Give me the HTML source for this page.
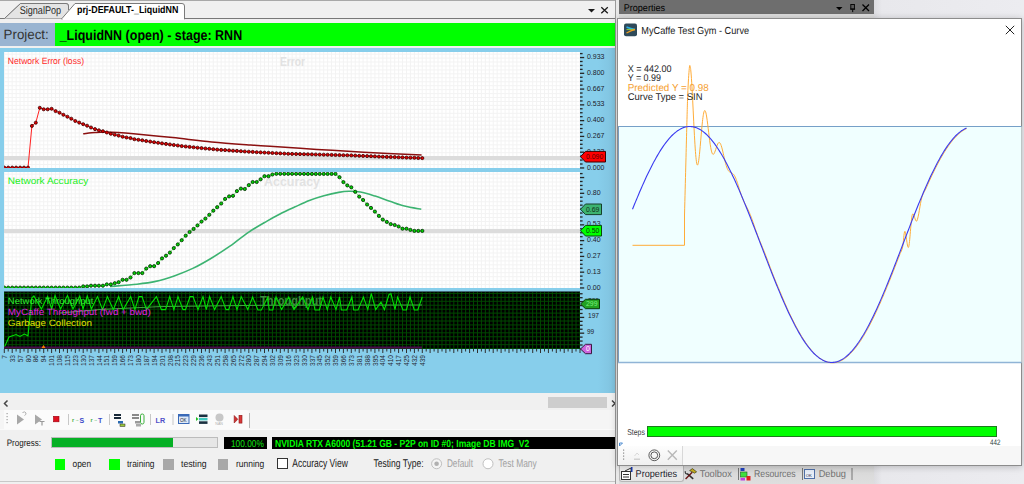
<!DOCTYPE html>
<html><head><meta charset="utf-8"><style>
html,body{margin:0;padding:0;}
body{width:1024px;height:484px;overflow:hidden;position:relative;background:#f0f0f0;font-family:"Liberation Sans",sans-serif;}
.t{position:absolute;white-space:nowrap;line-height:1;transform-origin:0 0;font-family:"Liberation Sans",sans-serif;}
svg{overflow:visible}
</style></head><body>
<div style="position:absolute;left:0;top:0;width:615px;height:1px;background:#a8a8a8"></div>
<svg style="position:absolute;left:0;top:0" width="615" height="23">
<rect x="0" y="1" width="615" height="22" fill="#f0f0f0"/>
<line x1="0" y1="18.5" x2="615" y2="18.5" stroke="#787878" stroke-width="1"/>
<path d="M4.5,18.5 L20.5,3.5 L66,3.5 Q68.5,3.5 68.5,6 L68.5,9" fill="#e4e4e4" stroke="#7a7a7a" stroke-width="1"/>
<path d="M4.5,18.5 L20.5,3.5 L66,3.5 Q68.5,3.5 68.5,6 L68.5,12 L62,18.5 Z" fill="#e4e4e4" stroke="none"/>
<path d="M4.5,18.5 L20.5,3.5 L66,3.5 Q68.5,3.5 68.5,6 L68.5,10" fill="none" stroke="#7a7a7a" stroke-width="1"/>
<path d="M61.5,19 L75,3.5 L182,3.5 Q184.5,3.5 184.5,6 L184.5,19 Z" fill="#ffffff" stroke="#7a7a7a" stroke-width="1"/>
<rect x="62.5" y="18" width="121.5" height="2" fill="#fff"/>
<path d="M588,9 L595,9 L591.5,12.5 Z" fill="#1a1a1a"/>
<path d="M601.3,7.2 L607.8,13.2 M607.8,7.2 L601.3,13.2" stroke="#1a1a1a" stroke-width="1.3"/>
</svg>


<div style="position:absolute;left:0;top:23px;width:55px;height:23px;background:#99b4d1"></div>
<div style="position:absolute;left:55px;top:23px;width:560px;height:23px;background:#00ff00"></div>


<div style="position:absolute;left:0;top:48px;width:615px;height:345px;background:linear-gradient(90deg,#87ceeb 0,#87ceeb 598px,#80c2de 615px)"></div>
<svg style="position:absolute;left:0;top:0" width="615" height="400">
<defs><pattern id="gw" x="1" y="1" width="4" height="4" patternUnits="userSpaceOnUse"><rect width="4" height="4" fill="#fff"/><rect x="0" y="0" width="4" height="1" fill="#f5f5f5"/><rect x="0" y="0" width="1" height="4" fill="#f5f5f5"/></pattern><pattern id="gb" x="1" y="1" width="4" height="4" patternUnits="userSpaceOnUse"><rect width="4" height="4" fill="#000"/><rect x="0" y="0" width="4" height="1" fill="#053d05"/><rect x="0" y="0" width="1" height="4" fill="#053d05"/></pattern><clipPath id="c1"><rect x="4" y="52" width="576" height="116"/></clipPath><clipPath id="c2"><rect x="4" y="172" width="576" height="116"/></clipPath><clipPath id="c3"><rect x="4" y="291.5" width="576" height="57.5"/></clipPath></defs>
<rect x="4" y="52" width="576" height="116" fill="#fff"/>
<g clip-path="url(#c1)"><path d="M4.30,52V168M8.24,52V168M12.19,52V168M16.13,52V168M20.07,52V168M24.02,52V168M27.96,52V168M31.90,52V168M35.84,52V168M39.79,52V168M43.73,52V168M47.67,52V168M51.62,52V168M55.56,52V168M59.50,52V168M63.45,52V168M67.39,52V168M71.33,52V168M75.27,52V168M79.22,52V168M83.16,52V168M87.10,52V168M91.05,52V168M94.99,52V168M98.93,52V168M102.88,52V168M106.82,52V168M110.76,52V168M114.70,52V168M118.65,52V168M122.59,52V168M126.53,52V168M130.48,52V168M134.42,52V168M138.36,52V168M142.31,52V168M146.25,52V168M150.19,52V168M154.13,52V168M158.08,52V168M162.02,52V168M165.96,52V168M169.91,52V168M173.85,52V168M177.79,52V168M181.74,52V168M185.68,52V168M189.62,52V168M193.56,52V168M197.51,52V168M201.45,52V168M205.39,52V168M209.34,52V168M213.28,52V168M217.22,52V168M221.17,52V168M225.11,52V168M229.05,52V168M232.99,52V168M236.94,52V168M240.88,52V168M244.82,52V168M248.77,52V168M252.71,52V168M256.65,52V168M260.60,52V168M264.54,52V168M268.48,52V168M272.42,52V168M276.37,52V168M280.31,52V168M284.25,52V168M288.20,52V168M292.14,52V168M296.08,52V168M300.03,52V168M303.97,52V168M307.91,52V168M311.85,52V168M315.80,52V168M319.74,52V168M323.68,52V168M327.63,52V168M331.57,52V168M335.51,52V168M339.46,52V168M343.40,52V168M347.34,52V168M351.28,52V168M355.23,52V168M359.17,52V168M363.11,52V168M367.06,52V168M371.00,52V168M374.94,52V168M378.88,52V168M382.83,52V168M386.77,52V168M390.71,52V168M394.66,52V168M398.60,52V168M402.54,52V168M406.49,52V168M410.43,52V168M414.37,52V168M418.31,52V168M422.26,52V168M426.20,52V168M430.14,52V168M434.09,52V168M438.03,52V168M441.97,52V168M445.92,52V168M449.86,52V168M453.80,52V168M457.75,52V168M461.69,52V168M465.63,52V168M469.57,52V168M473.52,52V168M477.46,52V168M481.40,52V168M485.35,52V168M489.29,52V168M493.23,52V168M497.18,52V168M501.12,52V168M505.06,52V168M509.00,52V168M512.95,52V168M516.89,52V168M520.83,52V168M524.78,52V168M528.72,52V168M532.66,52V168M536.61,52V168M540.55,52V168M544.49,52V168M548.43,52V168M552.38,52V168M556.32,52V168M560.26,52V168M564.21,52V168M568.15,52V168M572.09,52V168M576.03,52V168M579.98,52V168M4,168.50H580M4,164.56H580M4,160.61H580M4,156.67H580M4,152.73H580M4,148.78H580M4,144.84H580M4,140.90H580M4,136.96H580M4,133.01H580M4,129.07H580M4,125.13H580M4,121.18H580M4,117.24H580M4,113.30H580M4,109.35H580M4,105.41H580M4,101.47H580M4,97.53H580M4,93.58H580M4,89.64H580M4,85.70H580M4,81.75H580M4,77.81H580M4,73.87H580M4,69.92H580M4,65.98H580M4,62.04H580M4,58.10H580M4,54.15H580" stroke="#f3f3f3" stroke-width="1" fill="none"/></g>
<rect x="4" y="156" width="576" height="4" fill="#dcdcdc"/>
<text x="280" y="65.5" font-family="Liberation Sans" font-weight="bold" font-size="12.5" fill="#e2e2e2" textLength="25" lengthAdjust="spacingAndGlyphs">Error</text>
<g clip-path="url(#c1)">
<path d="M83.20,133.70 C85.17,133.52 91.48,132.87 95.00,132.60 C98.52,132.33 100.47,132.12 104.30,132.10 C108.13,132.08 113.12,132.23 118.00,132.50 C122.88,132.77 124.48,132.85 133.60,133.70 C142.72,134.55 159.68,136.23 172.70,137.60 C185.72,138.97 198.68,140.67 211.70,141.90 C224.72,143.13 241.08,144.28 250.80,145.00 C260.52,145.72 258.98,145.52 270.00,146.25 C281.02,146.98 301.27,148.41 316.90,149.40 C332.52,150.39 346.30,151.27 363.75,152.20 C381.20,153.13 411.96,154.53 421.60,155.00" fill="none" stroke="#8b1010" stroke-width="1.5"/>
<polyline points="4.3,167.6 8.2,167.6 12.2,167.6 16.1,167.6 20.1,167.6 24.0,167.6 28.0,167.6 31.9,125.9 35.8,122.7 39.8,107.8 43.7,109.3 47.7,109.3 51.6,108.8 55.6,111.1 59.5,112.7 63.4,114.8 67.4,116.7 71.3,118.7 75.3,121.0 79.2,122.6 83.2,124.2 87.1,125.7 91.0,127.5 95.0,129.1 98.9,130.3 102.9,131.2 106.8,132.5 110.8,133.8 114.7,134.7 118.6,135.6 122.6,136.7 126.5,137.5 130.5,138.1 134.4,139.2 138.4,139.8 142.3,140.3 146.2,141.0 150.2,141.6 154.1,142.2 158.1,142.8 162.0,143.4 166.0,143.9 169.9,144.5 173.8,145.0 177.8,145.5 181.7,146.1 185.7,146.5 189.6,146.9 193.6,147.3 197.5,147.7 201.5,148.1 205.4,148.5 209.3,148.8 213.3,149.2 217.2,149.6 221.2,149.9 225.1,150.1 229.1,150.4 233.0,150.7 236.9,150.9 240.9,151.2 244.8,151.5 248.8,151.7 252.7,151.9 256.7,152.2 260.6,152.4 264.5,152.6 268.5,152.8 272.4,153.0 276.4,153.2 280.3,153.4 284.3,153.6 288.2,153.8 292.1,153.9 296.1,154.0 300.0,154.1 304.0,154.2 307.9,154.3 311.9,154.4 315.8,154.5 319.7,154.6 323.7,154.7 327.6,154.8 331.6,154.9 335.5,155.0 339.5,155.1 343.4,155.2 347.3,155.3 351.3,155.4 355.2,155.6 359.2,155.8 363.1,155.9 367.1,156.1 371.0,156.2 374.9,156.4 378.9,156.6 382.8,156.7 386.8,156.9 390.7,157.0 394.7,157.1 398.6,157.3 402.5,157.4 406.5,157.6 410.4,157.7 414.4,157.8 418.3,158.0 422.3,158.1" fill="none" stroke="#ff2020" stroke-width="1"/>
<circle cx="4.3" cy="167.6" r="1.55" fill="#dd0000" stroke="#3a0000" stroke-width="0.8"/>
<circle cx="8.2" cy="167.6" r="1.55" fill="#dd0000" stroke="#3a0000" stroke-width="0.8"/>
<circle cx="12.2" cy="167.6" r="1.55" fill="#dd0000" stroke="#3a0000" stroke-width="0.8"/>
<circle cx="16.1" cy="167.6" r="1.55" fill="#dd0000" stroke="#3a0000" stroke-width="0.8"/>
<circle cx="20.1" cy="167.6" r="1.55" fill="#dd0000" stroke="#3a0000" stroke-width="0.8"/>
<circle cx="24.0" cy="167.6" r="1.55" fill="#dd0000" stroke="#3a0000" stroke-width="0.8"/>
<circle cx="28.0" cy="167.6" r="1.55" fill="#dd0000" stroke="#3a0000" stroke-width="0.8"/>
<circle cx="31.9" cy="125.9" r="1.55" fill="#dd0000" stroke="#3a0000" stroke-width="0.8"/>
<circle cx="35.8" cy="122.7" r="1.55" fill="#dd0000" stroke="#3a0000" stroke-width="0.8"/>
<circle cx="39.8" cy="107.8" r="1.55" fill="#dd0000" stroke="#3a0000" stroke-width="0.8"/>
<circle cx="43.7" cy="109.3" r="1.55" fill="#dd0000" stroke="#3a0000" stroke-width="0.8"/>
<circle cx="47.7" cy="109.3" r="1.55" fill="#dd0000" stroke="#3a0000" stroke-width="0.8"/>
<circle cx="51.6" cy="108.8" r="1.55" fill="#dd0000" stroke="#3a0000" stroke-width="0.8"/>
<circle cx="55.6" cy="111.1" r="1.55" fill="#dd0000" stroke="#3a0000" stroke-width="0.8"/>
<circle cx="59.5" cy="112.7" r="1.55" fill="#dd0000" stroke="#3a0000" stroke-width="0.8"/>
<circle cx="63.4" cy="114.8" r="1.55" fill="#dd0000" stroke="#3a0000" stroke-width="0.8"/>
<circle cx="67.4" cy="116.7" r="1.55" fill="#dd0000" stroke="#3a0000" stroke-width="0.8"/>
<circle cx="71.3" cy="118.7" r="1.55" fill="#dd0000" stroke="#3a0000" stroke-width="0.8"/>
<circle cx="75.3" cy="121.0" r="1.55" fill="#dd0000" stroke="#3a0000" stroke-width="0.8"/>
<circle cx="79.2" cy="122.6" r="1.55" fill="#dd0000" stroke="#3a0000" stroke-width="0.8"/>
<circle cx="83.2" cy="124.2" r="1.55" fill="#dd0000" stroke="#3a0000" stroke-width="0.8"/>
<circle cx="87.1" cy="125.7" r="1.55" fill="#dd0000" stroke="#3a0000" stroke-width="0.8"/>
<circle cx="91.0" cy="127.5" r="1.55" fill="#dd0000" stroke="#3a0000" stroke-width="0.8"/>
<circle cx="95.0" cy="129.1" r="1.55" fill="#dd0000" stroke="#3a0000" stroke-width="0.8"/>
<circle cx="98.9" cy="130.3" r="1.55" fill="#dd0000" stroke="#3a0000" stroke-width="0.8"/>
<circle cx="102.9" cy="131.2" r="1.55" fill="#dd0000" stroke="#3a0000" stroke-width="0.8"/>
<circle cx="106.8" cy="132.5" r="1.55" fill="#dd0000" stroke="#3a0000" stroke-width="0.8"/>
<circle cx="110.8" cy="133.8" r="1.55" fill="#dd0000" stroke="#3a0000" stroke-width="0.8"/>
<circle cx="114.7" cy="134.7" r="1.55" fill="#dd0000" stroke="#3a0000" stroke-width="0.8"/>
<circle cx="118.6" cy="135.6" r="1.55" fill="#dd0000" stroke="#3a0000" stroke-width="0.8"/>
<circle cx="122.6" cy="136.7" r="1.55" fill="#dd0000" stroke="#3a0000" stroke-width="0.8"/>
<circle cx="126.5" cy="137.5" r="1.55" fill="#dd0000" stroke="#3a0000" stroke-width="0.8"/>
<circle cx="130.5" cy="138.1" r="1.55" fill="#dd0000" stroke="#3a0000" stroke-width="0.8"/>
<circle cx="134.4" cy="139.2" r="1.55" fill="#dd0000" stroke="#3a0000" stroke-width="0.8"/>
<circle cx="138.4" cy="139.8" r="1.55" fill="#dd0000" stroke="#3a0000" stroke-width="0.8"/>
<circle cx="142.3" cy="140.3" r="1.55" fill="#dd0000" stroke="#3a0000" stroke-width="0.8"/>
<circle cx="146.2" cy="141.0" r="1.55" fill="#dd0000" stroke="#3a0000" stroke-width="0.8"/>
<circle cx="150.2" cy="141.6" r="1.55" fill="#dd0000" stroke="#3a0000" stroke-width="0.8"/>
<circle cx="154.1" cy="142.2" r="1.55" fill="#dd0000" stroke="#3a0000" stroke-width="0.8"/>
<circle cx="158.1" cy="142.8" r="1.55" fill="#dd0000" stroke="#3a0000" stroke-width="0.8"/>
<circle cx="162.0" cy="143.4" r="1.55" fill="#dd0000" stroke="#3a0000" stroke-width="0.8"/>
<circle cx="166.0" cy="143.9" r="1.55" fill="#dd0000" stroke="#3a0000" stroke-width="0.8"/>
<circle cx="169.9" cy="144.5" r="1.55" fill="#dd0000" stroke="#3a0000" stroke-width="0.8"/>
<circle cx="173.8" cy="145.0" r="1.55" fill="#dd0000" stroke="#3a0000" stroke-width="0.8"/>
<circle cx="177.8" cy="145.5" r="1.55" fill="#dd0000" stroke="#3a0000" stroke-width="0.8"/>
<circle cx="181.7" cy="146.1" r="1.55" fill="#dd0000" stroke="#3a0000" stroke-width="0.8"/>
<circle cx="185.7" cy="146.5" r="1.55" fill="#dd0000" stroke="#3a0000" stroke-width="0.8"/>
<circle cx="189.6" cy="146.9" r="1.55" fill="#dd0000" stroke="#3a0000" stroke-width="0.8"/>
<circle cx="193.6" cy="147.3" r="1.55" fill="#dd0000" stroke="#3a0000" stroke-width="0.8"/>
<circle cx="197.5" cy="147.7" r="1.55" fill="#dd0000" stroke="#3a0000" stroke-width="0.8"/>
<circle cx="201.5" cy="148.1" r="1.55" fill="#dd0000" stroke="#3a0000" stroke-width="0.8"/>
<circle cx="205.4" cy="148.5" r="1.55" fill="#dd0000" stroke="#3a0000" stroke-width="0.8"/>
<circle cx="209.3" cy="148.8" r="1.55" fill="#dd0000" stroke="#3a0000" stroke-width="0.8"/>
<circle cx="213.3" cy="149.2" r="1.55" fill="#dd0000" stroke="#3a0000" stroke-width="0.8"/>
<circle cx="217.2" cy="149.6" r="1.55" fill="#dd0000" stroke="#3a0000" stroke-width="0.8"/>
<circle cx="221.2" cy="149.9" r="1.55" fill="#dd0000" stroke="#3a0000" stroke-width="0.8"/>
<circle cx="225.1" cy="150.1" r="1.55" fill="#dd0000" stroke="#3a0000" stroke-width="0.8"/>
<circle cx="229.1" cy="150.4" r="1.55" fill="#dd0000" stroke="#3a0000" stroke-width="0.8"/>
<circle cx="233.0" cy="150.7" r="1.55" fill="#dd0000" stroke="#3a0000" stroke-width="0.8"/>
<circle cx="236.9" cy="150.9" r="1.55" fill="#dd0000" stroke="#3a0000" stroke-width="0.8"/>
<circle cx="240.9" cy="151.2" r="1.55" fill="#dd0000" stroke="#3a0000" stroke-width="0.8"/>
<circle cx="244.8" cy="151.5" r="1.55" fill="#dd0000" stroke="#3a0000" stroke-width="0.8"/>
<circle cx="248.8" cy="151.7" r="1.55" fill="#dd0000" stroke="#3a0000" stroke-width="0.8"/>
<circle cx="252.7" cy="151.9" r="1.55" fill="#dd0000" stroke="#3a0000" stroke-width="0.8"/>
<circle cx="256.7" cy="152.2" r="1.55" fill="#dd0000" stroke="#3a0000" stroke-width="0.8"/>
<circle cx="260.6" cy="152.4" r="1.55" fill="#dd0000" stroke="#3a0000" stroke-width="0.8"/>
<circle cx="264.5" cy="152.6" r="1.55" fill="#dd0000" stroke="#3a0000" stroke-width="0.8"/>
<circle cx="268.5" cy="152.8" r="1.55" fill="#dd0000" stroke="#3a0000" stroke-width="0.8"/>
<circle cx="272.4" cy="153.0" r="1.55" fill="#dd0000" stroke="#3a0000" stroke-width="0.8"/>
<circle cx="276.4" cy="153.2" r="1.55" fill="#dd0000" stroke="#3a0000" stroke-width="0.8"/>
<circle cx="280.3" cy="153.4" r="1.55" fill="#dd0000" stroke="#3a0000" stroke-width="0.8"/>
<circle cx="284.3" cy="153.6" r="1.55" fill="#dd0000" stroke="#3a0000" stroke-width="0.8"/>
<circle cx="288.2" cy="153.8" r="1.55" fill="#dd0000" stroke="#3a0000" stroke-width="0.8"/>
<circle cx="292.1" cy="153.9" r="1.55" fill="#dd0000" stroke="#3a0000" stroke-width="0.8"/>
<circle cx="296.1" cy="154.0" r="1.55" fill="#dd0000" stroke="#3a0000" stroke-width="0.8"/>
<circle cx="300.0" cy="154.1" r="1.55" fill="#dd0000" stroke="#3a0000" stroke-width="0.8"/>
<circle cx="304.0" cy="154.2" r="1.55" fill="#dd0000" stroke="#3a0000" stroke-width="0.8"/>
<circle cx="307.9" cy="154.3" r="1.55" fill="#dd0000" stroke="#3a0000" stroke-width="0.8"/>
<circle cx="311.9" cy="154.4" r="1.55" fill="#dd0000" stroke="#3a0000" stroke-width="0.8"/>
<circle cx="315.8" cy="154.5" r="1.55" fill="#dd0000" stroke="#3a0000" stroke-width="0.8"/>
<circle cx="319.7" cy="154.6" r="1.55" fill="#dd0000" stroke="#3a0000" stroke-width="0.8"/>
<circle cx="323.7" cy="154.7" r="1.55" fill="#dd0000" stroke="#3a0000" stroke-width="0.8"/>
<circle cx="327.6" cy="154.8" r="1.55" fill="#dd0000" stroke="#3a0000" stroke-width="0.8"/>
<circle cx="331.6" cy="154.9" r="1.55" fill="#dd0000" stroke="#3a0000" stroke-width="0.8"/>
<circle cx="335.5" cy="155.0" r="1.55" fill="#dd0000" stroke="#3a0000" stroke-width="0.8"/>
<circle cx="339.5" cy="155.1" r="1.55" fill="#dd0000" stroke="#3a0000" stroke-width="0.8"/>
<circle cx="343.4" cy="155.2" r="1.55" fill="#dd0000" stroke="#3a0000" stroke-width="0.8"/>
<circle cx="347.3" cy="155.3" r="1.55" fill="#dd0000" stroke="#3a0000" stroke-width="0.8"/>
<circle cx="351.3" cy="155.4" r="1.55" fill="#dd0000" stroke="#3a0000" stroke-width="0.8"/>
<circle cx="355.2" cy="155.6" r="1.55" fill="#dd0000" stroke="#3a0000" stroke-width="0.8"/>
<circle cx="359.2" cy="155.8" r="1.55" fill="#dd0000" stroke="#3a0000" stroke-width="0.8"/>
<circle cx="363.1" cy="155.9" r="1.55" fill="#dd0000" stroke="#3a0000" stroke-width="0.8"/>
<circle cx="367.1" cy="156.1" r="1.55" fill="#dd0000" stroke="#3a0000" stroke-width="0.8"/>
<circle cx="371.0" cy="156.2" r="1.55" fill="#dd0000" stroke="#3a0000" stroke-width="0.8"/>
<circle cx="374.9" cy="156.4" r="1.55" fill="#dd0000" stroke="#3a0000" stroke-width="0.8"/>
<circle cx="378.9" cy="156.6" r="1.55" fill="#dd0000" stroke="#3a0000" stroke-width="0.8"/>
<circle cx="382.8" cy="156.7" r="1.55" fill="#dd0000" stroke="#3a0000" stroke-width="0.8"/>
<circle cx="386.8" cy="156.9" r="1.55" fill="#dd0000" stroke="#3a0000" stroke-width="0.8"/>
<circle cx="390.7" cy="157.0" r="1.55" fill="#dd0000" stroke="#3a0000" stroke-width="0.8"/>
<circle cx="394.7" cy="157.1" r="1.55" fill="#dd0000" stroke="#3a0000" stroke-width="0.8"/>
<circle cx="398.6" cy="157.3" r="1.55" fill="#dd0000" stroke="#3a0000" stroke-width="0.8"/>
<circle cx="402.5" cy="157.4" r="1.55" fill="#dd0000" stroke="#3a0000" stroke-width="0.8"/>
<circle cx="406.5" cy="157.6" r="1.55" fill="#dd0000" stroke="#3a0000" stroke-width="0.8"/>
<circle cx="410.4" cy="157.7" r="1.55" fill="#dd0000" stroke="#3a0000" stroke-width="0.8"/>
<circle cx="414.4" cy="157.8" r="1.55" fill="#dd0000" stroke="#3a0000" stroke-width="0.8"/>
<circle cx="418.3" cy="158.0" r="1.55" fill="#dd0000" stroke="#3a0000" stroke-width="0.8"/>
<circle cx="422.3" cy="158.1" r="1.55" fill="#dd0000" stroke="#3a0000" stroke-width="0.8"/>
</g>
<rect x="4" y="172" width="576" height="116" fill="#fff"/>
<g clip-path="url(#c2)"><path d="M4.30,172V288M8.24,172V288M12.19,172V288M16.13,172V288M20.07,172V288M24.02,172V288M27.96,172V288M31.90,172V288M35.84,172V288M39.79,172V288M43.73,172V288M47.67,172V288M51.62,172V288M55.56,172V288M59.50,172V288M63.45,172V288M67.39,172V288M71.33,172V288M75.27,172V288M79.22,172V288M83.16,172V288M87.10,172V288M91.05,172V288M94.99,172V288M98.93,172V288M102.88,172V288M106.82,172V288M110.76,172V288M114.70,172V288M118.65,172V288M122.59,172V288M126.53,172V288M130.48,172V288M134.42,172V288M138.36,172V288M142.31,172V288M146.25,172V288M150.19,172V288M154.13,172V288M158.08,172V288M162.02,172V288M165.96,172V288M169.91,172V288M173.85,172V288M177.79,172V288M181.74,172V288M185.68,172V288M189.62,172V288M193.56,172V288M197.51,172V288M201.45,172V288M205.39,172V288M209.34,172V288M213.28,172V288M217.22,172V288M221.17,172V288M225.11,172V288M229.05,172V288M232.99,172V288M236.94,172V288M240.88,172V288M244.82,172V288M248.77,172V288M252.71,172V288M256.65,172V288M260.60,172V288M264.54,172V288M268.48,172V288M272.42,172V288M276.37,172V288M280.31,172V288M284.25,172V288M288.20,172V288M292.14,172V288M296.08,172V288M300.03,172V288M303.97,172V288M307.91,172V288M311.85,172V288M315.80,172V288M319.74,172V288M323.68,172V288M327.63,172V288M331.57,172V288M335.51,172V288M339.46,172V288M343.40,172V288M347.34,172V288M351.28,172V288M355.23,172V288M359.17,172V288M363.11,172V288M367.06,172V288M371.00,172V288M374.94,172V288M378.88,172V288M382.83,172V288M386.77,172V288M390.71,172V288M394.66,172V288M398.60,172V288M402.54,172V288M406.49,172V288M410.43,172V288M414.37,172V288M418.31,172V288M422.26,172V288M426.20,172V288M430.14,172V288M434.09,172V288M438.03,172V288M441.97,172V288M445.92,172V288M449.86,172V288M453.80,172V288M457.75,172V288M461.69,172V288M465.63,172V288M469.57,172V288M473.52,172V288M477.46,172V288M481.40,172V288M485.35,172V288M489.29,172V288M493.23,172V288M497.18,172V288M501.12,172V288M505.06,172V288M509.00,172V288M512.95,172V288M516.89,172V288M520.83,172V288M524.78,172V288M528.72,172V288M532.66,172V288M536.61,172V288M540.55,172V288M544.49,172V288M548.43,172V288M552.38,172V288M556.32,172V288M560.26,172V288M564.21,172V288M568.15,172V288M572.09,172V288M576.03,172V288M579.98,172V288M4,288.50H580M4,284.56H580M4,280.61H580M4,276.67H580M4,272.73H580M4,268.79H580M4,264.84H580M4,260.90H580M4,256.96H580M4,253.01H580M4,249.07H580M4,245.13H580M4,241.18H580M4,237.24H580M4,233.30H580M4,229.35H580M4,225.41H580M4,221.47H580M4,217.53H580M4,213.58H580M4,209.64H580M4,205.70H580M4,201.75H580M4,197.81H580M4,193.87H580M4,189.93H580M4,185.98H580M4,182.04H580M4,178.10H580M4,174.15H580" stroke="#f3f3f3" stroke-width="1" fill="none"/></g>
<rect x="4" y="229" width="576" height="4" fill="#dcdcdc"/>
<text x="264" y="186" font-family="Liberation Sans" font-weight="bold" font-size="12.5" fill="#e2e2e2" textLength="56" lengthAdjust="spacingAndGlyphs">Accuracy</text>
<g clip-path="url(#c2)">
<path d="M110.00,286.50 C114.50,286.12 129.38,285.05 137.00,284.20 C144.62,283.35 149.50,282.78 155.70,281.40 C161.90,280.02 168.02,278.07 174.20,275.90 C180.38,273.73 186.62,271.35 192.80,268.40 C198.98,265.45 205.12,261.90 211.30,258.20 C217.48,254.50 223.72,250.52 229.90,246.20 C236.08,241.88 242.22,236.48 248.40,232.30 C254.58,228.12 261.73,224.15 267.00,221.10 C272.27,218.05 275.40,216.33 280.00,214.00 C284.60,211.67 289.72,209.35 294.60,207.10 C299.48,204.85 304.42,202.38 309.30,200.50 C314.18,198.62 319.02,197.15 323.90,195.80 C328.78,194.45 334.45,193.15 338.60,192.40 C342.75,191.65 345.15,191.37 348.80,191.30 C352.45,191.23 356.10,191.20 360.50,192.00 C364.90,192.80 370.32,194.57 375.20,196.10 C380.08,197.63 384.92,199.53 389.80,201.20 C394.68,202.87 399.25,204.75 404.50,206.10 C409.75,207.45 418.50,208.77 421.30,209.30" fill="none" stroke="#3cb371" stroke-width="1.6"/>
<polyline points="4.3,287.6 8.2,287.6 12.2,287.6 16.1,287.6 20.1,287.6 24.0,287.6 28.0,287.6 31.9,287.6 35.8,287.6 39.8,287.6 43.7,287.6 47.7,287.6 51.6,287.6 55.6,287.6 59.5,287.6 63.4,287.6 67.4,287.6 71.3,287.6 75.3,287.6 79.2,287.6 83.2,286.4 87.1,286.4 91.0,285.7 95.0,285.7 98.9,285.7 102.9,285.7 106.8,284.4 110.8,284.4 114.7,283.2 118.6,282.2 122.6,279.8 126.5,279.8 130.5,277.5 134.4,273.1 138.4,273.1 142.3,273.1 146.2,268.6 150.2,266.2 154.1,266.2 158.1,263.0 162.0,258.4 166.0,255.7 169.9,252.6 173.8,248.1 177.8,244.4 181.7,240.2 185.7,235.7 189.6,232.0 193.6,228.9 197.5,225.4 201.5,221.6 205.4,218.6 209.3,214.8 213.3,210.7 217.2,207.2 221.2,203.5 225.1,198.9 229.1,196.4 233.0,195.8 236.9,191.1 240.9,188.6 244.8,189.0 248.8,185.1 252.7,182.0 256.7,182.0 260.6,179.3 264.5,176.2 268.5,176.2 272.4,174.5 276.4,173.8 280.3,173.8 284.3,173.8 288.2,173.8 292.1,173.8 296.1,173.8 300.0,173.8 304.0,173.8 307.9,173.9 311.9,173.9 315.8,173.9 319.7,173.9 323.7,173.9 327.6,173.9 331.6,173.9 335.5,173.9 339.5,177.2 343.4,182.1 347.3,185.4 351.3,187.3 355.2,191.8 359.2,196.6 363.1,200.0 367.1,204.5 371.0,207.9 374.9,211.6 378.9,215.9 382.8,219.6 386.8,221.9 390.7,224.1 394.7,225.0 398.6,226.5 402.5,228.7 406.5,228.7 410.4,229.9 414.4,230.9 418.3,230.9 422.3,230.9" fill="none" stroke="#7cfc7c" stroke-width="1"/>
<circle cx="4.3" cy="287.6" r="1.6" fill="#00d000" stroke="#002a00" stroke-width="0.8"/>
<circle cx="8.2" cy="287.6" r="1.6" fill="#00d000" stroke="#002a00" stroke-width="0.8"/>
<circle cx="12.2" cy="287.6" r="1.6" fill="#00d000" stroke="#002a00" stroke-width="0.8"/>
<circle cx="16.1" cy="287.6" r="1.6" fill="#00d000" stroke="#002a00" stroke-width="0.8"/>
<circle cx="20.1" cy="287.6" r="1.6" fill="#00d000" stroke="#002a00" stroke-width="0.8"/>
<circle cx="24.0" cy="287.6" r="1.6" fill="#00d000" stroke="#002a00" stroke-width="0.8"/>
<circle cx="28.0" cy="287.6" r="1.6" fill="#00d000" stroke="#002a00" stroke-width="0.8"/>
<circle cx="31.9" cy="287.6" r="1.6" fill="#00d000" stroke="#002a00" stroke-width="0.8"/>
<circle cx="35.8" cy="287.6" r="1.6" fill="#00d000" stroke="#002a00" stroke-width="0.8"/>
<circle cx="39.8" cy="287.6" r="1.6" fill="#00d000" stroke="#002a00" stroke-width="0.8"/>
<circle cx="43.7" cy="287.6" r="1.6" fill="#00d000" stroke="#002a00" stroke-width="0.8"/>
<circle cx="47.7" cy="287.6" r="1.6" fill="#00d000" stroke="#002a00" stroke-width="0.8"/>
<circle cx="51.6" cy="287.6" r="1.6" fill="#00d000" stroke="#002a00" stroke-width="0.8"/>
<circle cx="55.6" cy="287.6" r="1.6" fill="#00d000" stroke="#002a00" stroke-width="0.8"/>
<circle cx="59.5" cy="287.6" r="1.6" fill="#00d000" stroke="#002a00" stroke-width="0.8"/>
<circle cx="63.4" cy="287.6" r="1.6" fill="#00d000" stroke="#002a00" stroke-width="0.8"/>
<circle cx="67.4" cy="287.6" r="1.6" fill="#00d000" stroke="#002a00" stroke-width="0.8"/>
<circle cx="71.3" cy="287.6" r="1.6" fill="#00d000" stroke="#002a00" stroke-width="0.8"/>
<circle cx="75.3" cy="287.6" r="1.6" fill="#00d000" stroke="#002a00" stroke-width="0.8"/>
<circle cx="79.2" cy="287.6" r="1.6" fill="#00d000" stroke="#002a00" stroke-width="0.8"/>
<circle cx="83.2" cy="286.4" r="1.6" fill="#00d000" stroke="#002a00" stroke-width="0.8"/>
<circle cx="87.1" cy="286.4" r="1.6" fill="#00d000" stroke="#002a00" stroke-width="0.8"/>
<circle cx="91.0" cy="285.7" r="1.6" fill="#00d000" stroke="#002a00" stroke-width="0.8"/>
<circle cx="95.0" cy="285.7" r="1.6" fill="#00d000" stroke="#002a00" stroke-width="0.8"/>
<circle cx="98.9" cy="285.7" r="1.6" fill="#00d000" stroke="#002a00" stroke-width="0.8"/>
<circle cx="102.9" cy="285.7" r="1.6" fill="#00d000" stroke="#002a00" stroke-width="0.8"/>
<circle cx="106.8" cy="284.4" r="1.6" fill="#00d000" stroke="#002a00" stroke-width="0.8"/>
<circle cx="110.8" cy="284.4" r="1.6" fill="#00d000" stroke="#002a00" stroke-width="0.8"/>
<circle cx="114.7" cy="283.2" r="1.6" fill="#00d000" stroke="#002a00" stroke-width="0.8"/>
<circle cx="118.6" cy="282.2" r="1.6" fill="#00d000" stroke="#002a00" stroke-width="0.8"/>
<circle cx="122.6" cy="279.8" r="1.6" fill="#00d000" stroke="#002a00" stroke-width="0.8"/>
<circle cx="126.5" cy="279.8" r="1.6" fill="#00d000" stroke="#002a00" stroke-width="0.8"/>
<circle cx="130.5" cy="277.5" r="1.6" fill="#00d000" stroke="#002a00" stroke-width="0.8"/>
<circle cx="134.4" cy="273.1" r="1.6" fill="#00d000" stroke="#002a00" stroke-width="0.8"/>
<circle cx="138.4" cy="273.1" r="1.6" fill="#00d000" stroke="#002a00" stroke-width="0.8"/>
<circle cx="142.3" cy="273.1" r="1.6" fill="#00d000" stroke="#002a00" stroke-width="0.8"/>
<circle cx="146.2" cy="268.6" r="1.6" fill="#00d000" stroke="#002a00" stroke-width="0.8"/>
<circle cx="150.2" cy="266.2" r="1.6" fill="#00d000" stroke="#002a00" stroke-width="0.8"/>
<circle cx="154.1" cy="266.2" r="1.6" fill="#00d000" stroke="#002a00" stroke-width="0.8"/>
<circle cx="158.1" cy="263.0" r="1.6" fill="#00d000" stroke="#002a00" stroke-width="0.8"/>
<circle cx="162.0" cy="258.4" r="1.6" fill="#00d000" stroke="#002a00" stroke-width="0.8"/>
<circle cx="166.0" cy="255.7" r="1.6" fill="#00d000" stroke="#002a00" stroke-width="0.8"/>
<circle cx="169.9" cy="252.6" r="1.6" fill="#00d000" stroke="#002a00" stroke-width="0.8"/>
<circle cx="173.8" cy="248.1" r="1.6" fill="#00d000" stroke="#002a00" stroke-width="0.8"/>
<circle cx="177.8" cy="244.4" r="1.6" fill="#00d000" stroke="#002a00" stroke-width="0.8"/>
<circle cx="181.7" cy="240.2" r="1.6" fill="#00d000" stroke="#002a00" stroke-width="0.8"/>
<circle cx="185.7" cy="235.7" r="1.6" fill="#00d000" stroke="#002a00" stroke-width="0.8"/>
<circle cx="189.6" cy="232.0" r="1.6" fill="#00d000" stroke="#002a00" stroke-width="0.8"/>
<circle cx="193.6" cy="228.9" r="1.6" fill="#00d000" stroke="#002a00" stroke-width="0.8"/>
<circle cx="197.5" cy="225.4" r="1.6" fill="#00d000" stroke="#002a00" stroke-width="0.8"/>
<circle cx="201.5" cy="221.6" r="1.6" fill="#00d000" stroke="#002a00" stroke-width="0.8"/>
<circle cx="205.4" cy="218.6" r="1.6" fill="#00d000" stroke="#002a00" stroke-width="0.8"/>
<circle cx="209.3" cy="214.8" r="1.6" fill="#00d000" stroke="#002a00" stroke-width="0.8"/>
<circle cx="213.3" cy="210.7" r="1.6" fill="#00d000" stroke="#002a00" stroke-width="0.8"/>
<circle cx="217.2" cy="207.2" r="1.6" fill="#00d000" stroke="#002a00" stroke-width="0.8"/>
<circle cx="221.2" cy="203.5" r="1.6" fill="#00d000" stroke="#002a00" stroke-width="0.8"/>
<circle cx="225.1" cy="198.9" r="1.6" fill="#00d000" stroke="#002a00" stroke-width="0.8"/>
<circle cx="229.1" cy="196.4" r="1.6" fill="#00d000" stroke="#002a00" stroke-width="0.8"/>
<circle cx="233.0" cy="195.8" r="1.6" fill="#00d000" stroke="#002a00" stroke-width="0.8"/>
<circle cx="236.9" cy="191.1" r="1.6" fill="#00d000" stroke="#002a00" stroke-width="0.8"/>
<circle cx="240.9" cy="188.6" r="1.6" fill="#00d000" stroke="#002a00" stroke-width="0.8"/>
<circle cx="244.8" cy="189.0" r="1.6" fill="#00d000" stroke="#002a00" stroke-width="0.8"/>
<circle cx="248.8" cy="185.1" r="1.6" fill="#00d000" stroke="#002a00" stroke-width="0.8"/>
<circle cx="252.7" cy="182.0" r="1.6" fill="#00d000" stroke="#002a00" stroke-width="0.8"/>
<circle cx="256.7" cy="182.0" r="1.6" fill="#00d000" stroke="#002a00" stroke-width="0.8"/>
<circle cx="260.6" cy="179.3" r="1.6" fill="#00d000" stroke="#002a00" stroke-width="0.8"/>
<circle cx="264.5" cy="176.2" r="1.6" fill="#00d000" stroke="#002a00" stroke-width="0.8"/>
<circle cx="268.5" cy="176.2" r="1.6" fill="#00d000" stroke="#002a00" stroke-width="0.8"/>
<circle cx="272.4" cy="174.5" r="1.6" fill="#00d000" stroke="#002a00" stroke-width="0.8"/>
<circle cx="276.4" cy="173.8" r="1.6" fill="#00d000" stroke="#002a00" stroke-width="0.8"/>
<circle cx="280.3" cy="173.8" r="1.6" fill="#00d000" stroke="#002a00" stroke-width="0.8"/>
<circle cx="284.3" cy="173.8" r="1.6" fill="#00d000" stroke="#002a00" stroke-width="0.8"/>
<circle cx="288.2" cy="173.8" r="1.6" fill="#00d000" stroke="#002a00" stroke-width="0.8"/>
<circle cx="292.1" cy="173.8" r="1.6" fill="#00d000" stroke="#002a00" stroke-width="0.8"/>
<circle cx="296.1" cy="173.8" r="1.6" fill="#00d000" stroke="#002a00" stroke-width="0.8"/>
<circle cx="300.0" cy="173.8" r="1.6" fill="#00d000" stroke="#002a00" stroke-width="0.8"/>
<circle cx="304.0" cy="173.8" r="1.6" fill="#00d000" stroke="#002a00" stroke-width="0.8"/>
<circle cx="307.9" cy="173.9" r="1.6" fill="#00d000" stroke="#002a00" stroke-width="0.8"/>
<circle cx="311.9" cy="173.9" r="1.6" fill="#00d000" stroke="#002a00" stroke-width="0.8"/>
<circle cx="315.8" cy="173.9" r="1.6" fill="#00d000" stroke="#002a00" stroke-width="0.8"/>
<circle cx="319.7" cy="173.9" r="1.6" fill="#00d000" stroke="#002a00" stroke-width="0.8"/>
<circle cx="323.7" cy="173.9" r="1.6" fill="#00d000" stroke="#002a00" stroke-width="0.8"/>
<circle cx="327.6" cy="173.9" r="1.6" fill="#00d000" stroke="#002a00" stroke-width="0.8"/>
<circle cx="331.6" cy="173.9" r="1.6" fill="#00d000" stroke="#002a00" stroke-width="0.8"/>
<circle cx="335.5" cy="173.9" r="1.6" fill="#00d000" stroke="#002a00" stroke-width="0.8"/>
<circle cx="339.5" cy="177.2" r="1.6" fill="#00d000" stroke="#002a00" stroke-width="0.8"/>
<circle cx="343.4" cy="182.1" r="1.6" fill="#00d000" stroke="#002a00" stroke-width="0.8"/>
<circle cx="347.3" cy="185.4" r="1.6" fill="#00d000" stroke="#002a00" stroke-width="0.8"/>
<circle cx="351.3" cy="187.3" r="1.6" fill="#00d000" stroke="#002a00" stroke-width="0.8"/>
<circle cx="355.2" cy="191.8" r="1.6" fill="#00d000" stroke="#002a00" stroke-width="0.8"/>
<circle cx="359.2" cy="196.6" r="1.6" fill="#00d000" stroke="#002a00" stroke-width="0.8"/>
<circle cx="363.1" cy="200.0" r="1.6" fill="#00d000" stroke="#002a00" stroke-width="0.8"/>
<circle cx="367.1" cy="204.5" r="1.6" fill="#00d000" stroke="#002a00" stroke-width="0.8"/>
<circle cx="371.0" cy="207.9" r="1.6" fill="#00d000" stroke="#002a00" stroke-width="0.8"/>
<circle cx="374.9" cy="211.6" r="1.6" fill="#00d000" stroke="#002a00" stroke-width="0.8"/>
<circle cx="378.9" cy="215.9" r="1.6" fill="#00d000" stroke="#002a00" stroke-width="0.8"/>
<circle cx="382.8" cy="219.6" r="1.6" fill="#00d000" stroke="#002a00" stroke-width="0.8"/>
<circle cx="386.8" cy="221.9" r="1.6" fill="#00d000" stroke="#002a00" stroke-width="0.8"/>
<circle cx="390.7" cy="224.1" r="1.6" fill="#00d000" stroke="#002a00" stroke-width="0.8"/>
<circle cx="394.7" cy="225.0" r="1.6" fill="#00d000" stroke="#002a00" stroke-width="0.8"/>
<circle cx="398.6" cy="226.5" r="1.6" fill="#00d000" stroke="#002a00" stroke-width="0.8"/>
<circle cx="402.5" cy="228.7" r="1.6" fill="#00d000" stroke="#002a00" stroke-width="0.8"/>
<circle cx="406.5" cy="228.7" r="1.6" fill="#00d000" stroke="#002a00" stroke-width="0.8"/>
<circle cx="410.4" cy="229.9" r="1.6" fill="#00d000" stroke="#002a00" stroke-width="0.8"/>
<circle cx="414.4" cy="230.9" r="1.6" fill="#00d000" stroke="#002a00" stroke-width="0.8"/>
<circle cx="418.3" cy="230.9" r="1.6" fill="#00d000" stroke="#002a00" stroke-width="0.8"/>
<circle cx="422.3" cy="230.9" r="1.6" fill="#00d000" stroke="#002a00" stroke-width="0.8"/>
</g>
<rect x="4" y="291.5" width="576" height="57.5" fill="#000"/>
<g clip-path="url(#c3)"><path d="M4.30,292V348.8M8.24,292V348.8M12.19,292V348.8M16.13,292V348.8M20.07,292V348.8M24.02,292V348.8M27.96,292V348.8M31.90,292V348.8M35.84,292V348.8M39.79,292V348.8M43.73,292V348.8M47.67,292V348.8M51.62,292V348.8M55.56,292V348.8M59.50,292V348.8M63.45,292V348.8M67.39,292V348.8M71.33,292V348.8M75.27,292V348.8M79.22,292V348.8M83.16,292V348.8M87.10,292V348.8M91.05,292V348.8M94.99,292V348.8M98.93,292V348.8M102.88,292V348.8M106.82,292V348.8M110.76,292V348.8M114.70,292V348.8M118.65,292V348.8M122.59,292V348.8M126.53,292V348.8M130.48,292V348.8M134.42,292V348.8M138.36,292V348.8M142.31,292V348.8M146.25,292V348.8M150.19,292V348.8M154.13,292V348.8M158.08,292V348.8M162.02,292V348.8M165.96,292V348.8M169.91,292V348.8M173.85,292V348.8M177.79,292V348.8M181.74,292V348.8M185.68,292V348.8M189.62,292V348.8M193.56,292V348.8M197.51,292V348.8M201.45,292V348.8M205.39,292V348.8M209.34,292V348.8M213.28,292V348.8M217.22,292V348.8M221.17,292V348.8M225.11,292V348.8M229.05,292V348.8M232.99,292V348.8M236.94,292V348.8M240.88,292V348.8M244.82,292V348.8M248.77,292V348.8M252.71,292V348.8M256.65,292V348.8M260.60,292V348.8M264.54,292V348.8M268.48,292V348.8M272.42,292V348.8M276.37,292V348.8M280.31,292V348.8M284.25,292V348.8M288.20,292V348.8M292.14,292V348.8M296.08,292V348.8M300.03,292V348.8M303.97,292V348.8M307.91,292V348.8M311.85,292V348.8M315.80,292V348.8M319.74,292V348.8M323.68,292V348.8M327.63,292V348.8M331.57,292V348.8M335.51,292V348.8M339.46,292V348.8M343.40,292V348.8M347.34,292V348.8M351.28,292V348.8M355.23,292V348.8M359.17,292V348.8M363.11,292V348.8M367.06,292V348.8M371.00,292V348.8M374.94,292V348.8M378.88,292V348.8M382.83,292V348.8M386.77,292V348.8M390.71,292V348.8M394.66,292V348.8M398.60,292V348.8M402.54,292V348.8M406.49,292V348.8M410.43,292V348.8M414.37,292V348.8M418.31,292V348.8M422.26,292V348.8M426.20,292V348.8M430.14,292V348.8M434.09,292V348.8M438.03,292V348.8M441.97,292V348.8M445.92,292V348.8M449.86,292V348.8M453.80,292V348.8M457.75,292V348.8M461.69,292V348.8M465.63,292V348.8M469.57,292V348.8M473.52,292V348.8M477.46,292V348.8M481.40,292V348.8M485.35,292V348.8M489.29,292V348.8M493.23,292V348.8M497.18,292V348.8M501.12,292V348.8M505.06,292V348.8M509.00,292V348.8M512.95,292V348.8M516.89,292V348.8M520.83,292V348.8M524.78,292V348.8M528.72,292V348.8M532.66,292V348.8M536.61,292V348.8M540.55,292V348.8M544.49,292V348.8M548.43,292V348.8M552.38,292V348.8M556.32,292V348.8M560.26,292V348.8M564.21,292V348.8M568.15,292V348.8M572.09,292V348.8M576.03,292V348.8M579.98,292V348.8M4,348.60H580M4,344.66H580M4,340.71H580M4,336.77H580M4,332.83H580M4,328.89H580M4,324.94H580M4,321.00H580M4,317.06H580M4,313.11H580M4,309.17H580M4,305.23H580M4,301.28H580M4,297.34H580M4,293.40H580" stroke="#004800" stroke-width="1" fill="none"/></g>
<text x="260" y="305" font-family="Liberation Sans" font-weight="bold" font-size="12.6" fill="#3d8a3d" textLength="62" lengthAdjust="spacingAndGlyphs">Throughput</text>
<g clip-path="url(#c3)">
<polyline points="60.0,313.0 100.0,309.5 160.0,306.6 260.0,305.3 422.0,305.0" fill="none" stroke="#3ea83e" stroke-width="1"/>
<polyline points="4.0,348.0 9.0,337.0 16.0,334.5 20.0,336.5 24.3,334.0 28.0,335.8 31.8,298.0 33.9,296.0 41.4,309.0 47.6,296.5 51.7,309.0 55.0,295.5 60.6,309.0 67.5,295.5 73.0,309.0 79.8,296.0 83.0,309.0 87.3,296.0 91.4,309.0 97.5,296.6 102.5,309.6 107.4,296.6 113.3,309.6 118.6,296.6 123.2,309.6 130.7,296.6 134.9,309.6 139.0,296.6 142.0,296.6 146.5,309.6 156.4,296.6 161.4,309.6 165.6,309.6 169.7,296.6 173.9,309.6 178.0,296.6 183.0,309.6 185.5,309.6 190.0,296.6 193.0,296.6 198.0,309.6 203.0,296.6 206.3,309.6 209.6,296.6 214.6,309.6 221.2,296.6 226.0,309.6 228.7,309.6 232.9,296.6 237.0,309.6 241.2,296.6 247.8,309.6 252.6,297.0 257.9,310.0 261.4,310.0 267.6,297.5 269.3,310.0 272.8,310.0 276.0,297.0 281.6,309.6 288.7,297.0 294.0,309.6 302.7,297.0 308.0,309.6 312.4,297.0 315.0,310.0 319.4,310.0 323.0,297.0 327.3,309.6 330.8,297.0 336.0,309.6 339.6,297.0 341.4,310.0 346.7,310.0 351.9,297.0 353.7,310.0 358.0,310.0 363.4,297.0 367.8,309.6 371.3,293.5 375.7,309.6 381.0,302.0 384.4,309.6 389.0,294.5 391.0,293.8 395.0,309.6 397.6,297.0 403.0,310.0 406.4,310.0 410.0,297.0 414.3,310.0 417.8,310.0 422.2,297.0" fill="none" stroke="#00e000" stroke-width="1.1"/>
<rect x="4" y="346.5" width="418" height="2" fill="#4a0a4a"/>
<path d="M41.5,348 L43.5,345 L45.5,348 Z" fill="#ff7a00"/>
</g>
<rect x="3.8" y="349" width="1" height="4" fill="#303030"/>
<rect x="7.7" y="349" width="1" height="2.5" fill="#303030"/>
<rect x="11.7" y="349" width="1" height="4" fill="#303030"/>
<rect x="15.6" y="349" width="1" height="2.5" fill="#303030"/>
<rect x="19.6" y="349" width="1" height="4" fill="#303030"/>
<rect x="23.5" y="349" width="1" height="2.5" fill="#303030"/>
<rect x="27.5" y="349" width="1" height="4" fill="#303030"/>
<rect x="31.4" y="349" width="1" height="2.5" fill="#303030"/>
<rect x="35.3" y="349" width="1" height="4" fill="#303030"/>
<rect x="39.3" y="349" width="1" height="2.5" fill="#303030"/>
<rect x="43.2" y="349" width="1" height="4" fill="#303030"/>
<rect x="47.2" y="349" width="1" height="2.5" fill="#303030"/>
<rect x="51.1" y="349" width="1" height="4" fill="#303030"/>
<rect x="55.1" y="349" width="1" height="2.5" fill="#303030"/>
<rect x="59.0" y="349" width="1" height="4" fill="#303030"/>
<rect x="62.9" y="349" width="1" height="2.5" fill="#303030"/>
<rect x="66.9" y="349" width="1" height="4" fill="#303030"/>
<rect x="70.8" y="349" width="1" height="2.5" fill="#303030"/>
<rect x="74.8" y="349" width="1" height="4" fill="#303030"/>
<rect x="78.7" y="349" width="1" height="2.5" fill="#303030"/>
<rect x="82.7" y="349" width="1" height="4" fill="#303030"/>
<rect x="86.6" y="349" width="1" height="2.5" fill="#303030"/>
<rect x="90.5" y="349" width="1" height="4" fill="#303030"/>
<rect x="94.5" y="349" width="1" height="2.5" fill="#303030"/>
<rect x="98.4" y="349" width="1" height="4" fill="#303030"/>
<rect x="102.4" y="349" width="1" height="2.5" fill="#303030"/>
<rect x="106.3" y="349" width="1" height="4" fill="#303030"/>
<rect x="110.3" y="349" width="1" height="2.5" fill="#303030"/>
<rect x="114.2" y="349" width="1" height="4" fill="#303030"/>
<rect x="118.1" y="349" width="1" height="2.5" fill="#303030"/>
<rect x="122.1" y="349" width="1" height="4" fill="#303030"/>
<rect x="126.0" y="349" width="1" height="2.5" fill="#303030"/>
<rect x="130.0" y="349" width="1" height="4" fill="#303030"/>
<rect x="133.9" y="349" width="1" height="2.5" fill="#303030"/>
<rect x="137.9" y="349" width="1" height="4" fill="#303030"/>
<rect x="141.8" y="349" width="1" height="2.5" fill="#303030"/>
<rect x="145.7" y="349" width="1" height="4" fill="#303030"/>
<rect x="149.7" y="349" width="1" height="2.5" fill="#303030"/>
<rect x="153.6" y="349" width="1" height="4" fill="#303030"/>
<rect x="157.6" y="349" width="1" height="2.5" fill="#303030"/>
<rect x="161.5" y="349" width="1" height="4" fill="#303030"/>
<rect x="165.5" y="349" width="1" height="2.5" fill="#303030"/>
<rect x="169.4" y="349" width="1" height="4" fill="#303030"/>
<rect x="173.3" y="349" width="1" height="2.5" fill="#303030"/>
<rect x="177.3" y="349" width="1" height="4" fill="#303030"/>
<rect x="181.2" y="349" width="1" height="2.5" fill="#303030"/>
<rect x="185.2" y="349" width="1" height="4" fill="#303030"/>
<rect x="189.1" y="349" width="1" height="2.5" fill="#303030"/>
<rect x="193.1" y="349" width="1" height="4" fill="#303030"/>
<rect x="197.0" y="349" width="1" height="2.5" fill="#303030"/>
<rect x="201.0" y="349" width="1" height="4" fill="#303030"/>
<rect x="204.9" y="349" width="1" height="2.5" fill="#303030"/>
<rect x="208.8" y="349" width="1" height="4" fill="#303030"/>
<rect x="212.8" y="349" width="1" height="2.5" fill="#303030"/>
<rect x="216.7" y="349" width="1" height="4" fill="#303030"/>
<rect x="220.7" y="349" width="1" height="2.5" fill="#303030"/>
<rect x="224.6" y="349" width="1" height="4" fill="#303030"/>
<rect x="228.6" y="349" width="1" height="2.5" fill="#303030"/>
<rect x="232.5" y="349" width="1" height="4" fill="#303030"/>
<rect x="236.4" y="349" width="1" height="2.5" fill="#303030"/>
<rect x="240.4" y="349" width="1" height="4" fill="#303030"/>
<rect x="244.3" y="349" width="1" height="2.5" fill="#303030"/>
<rect x="248.3" y="349" width="1" height="4" fill="#303030"/>
<rect x="252.2" y="349" width="1" height="2.5" fill="#303030"/>
<rect x="256.2" y="349" width="1" height="4" fill="#303030"/>
<rect x="260.1" y="349" width="1" height="2.5" fill="#303030"/>
<rect x="264.0" y="349" width="1" height="4" fill="#303030"/>
<rect x="268.0" y="349" width="1" height="2.5" fill="#303030"/>
<rect x="271.9" y="349" width="1" height="4" fill="#303030"/>
<rect x="275.9" y="349" width="1" height="2.5" fill="#303030"/>
<rect x="279.8" y="349" width="1" height="4" fill="#303030"/>
<rect x="283.8" y="349" width="1" height="2.5" fill="#303030"/>
<rect x="287.7" y="349" width="1" height="4" fill="#303030"/>
<rect x="291.6" y="349" width="1" height="2.5" fill="#303030"/>
<rect x="295.6" y="349" width="1" height="4" fill="#303030"/>
<rect x="299.5" y="349" width="1" height="2.5" fill="#303030"/>
<rect x="303.5" y="349" width="1" height="4" fill="#303030"/>
<rect x="307.4" y="349" width="1" height="2.5" fill="#303030"/>
<rect x="311.4" y="349" width="1" height="4" fill="#303030"/>
<rect x="315.3" y="349" width="1" height="2.5" fill="#303030"/>
<rect x="319.2" y="349" width="1" height="4" fill="#303030"/>
<rect x="323.2" y="349" width="1" height="2.5" fill="#303030"/>
<rect x="327.1" y="349" width="1" height="4" fill="#303030"/>
<rect x="331.1" y="349" width="1" height="2.5" fill="#303030"/>
<rect x="335.0" y="349" width="1" height="4" fill="#303030"/>
<rect x="339.0" y="349" width="1" height="2.5" fill="#303030"/>
<rect x="342.9" y="349" width="1" height="4" fill="#303030"/>
<rect x="346.8" y="349" width="1" height="2.5" fill="#303030"/>
<rect x="350.8" y="349" width="1" height="4" fill="#303030"/>
<rect x="354.7" y="349" width="1" height="2.5" fill="#303030"/>
<rect x="358.7" y="349" width="1" height="4" fill="#303030"/>
<rect x="362.6" y="349" width="1" height="2.5" fill="#303030"/>
<rect x="366.6" y="349" width="1" height="4" fill="#303030"/>
<rect x="370.5" y="349" width="1" height="2.5" fill="#303030"/>
<rect x="374.4" y="349" width="1" height="4" fill="#303030"/>
<rect x="378.4" y="349" width="1" height="2.5" fill="#303030"/>
<rect x="382.3" y="349" width="1" height="4" fill="#303030"/>
<rect x="386.3" y="349" width="1" height="2.5" fill="#303030"/>
<rect x="390.2" y="349" width="1" height="4" fill="#303030"/>
<rect x="394.2" y="349" width="1" height="2.5" fill="#303030"/>
<rect x="398.1" y="349" width="1" height="4" fill="#303030"/>
<rect x="402.0" y="349" width="1" height="2.5" fill="#303030"/>
<rect x="406.0" y="349" width="1" height="4" fill="#303030"/>
<rect x="409.9" y="349" width="1" height="2.5" fill="#303030"/>
<rect x="413.9" y="349" width="1" height="4" fill="#303030"/>
<rect x="417.8" y="349" width="1" height="2.5" fill="#303030"/>
<rect x="421.8" y="349" width="1" height="4" fill="#303030"/>
<rect x="425.7" y="349" width="1" height="2.5" fill="#303030"/>
<rect x="429.6" y="349" width="1" height="4" fill="#303030"/>
<rect x="433.6" y="349" width="1" height="2.5" fill="#303030"/>
<rect x="437.5" y="349" width="1" height="4" fill="#303030"/>
<rect x="441.5" y="349" width="1" height="2.5" fill="#303030"/>
<rect x="445.4" y="349" width="1" height="4" fill="#303030"/>
<rect x="449.4" y="349" width="1" height="2.5" fill="#303030"/>
<rect x="453.3" y="349" width="1" height="4" fill="#303030"/>
<rect x="457.2" y="349" width="1" height="2.5" fill="#303030"/>
<rect x="461.2" y="349" width="1" height="4" fill="#303030"/>
<rect x="465.1" y="349" width="1" height="2.5" fill="#303030"/>
<rect x="469.1" y="349" width="1" height="4" fill="#303030"/>
<rect x="473.0" y="349" width="1" height="2.5" fill="#303030"/>
<rect x="477.0" y="349" width="1" height="4" fill="#303030"/>
<rect x="480.9" y="349" width="1" height="2.5" fill="#303030"/>
<rect x="484.8" y="349" width="1" height="4" fill="#303030"/>
<rect x="488.8" y="349" width="1" height="2.5" fill="#303030"/>
<rect x="492.7" y="349" width="1" height="4" fill="#303030"/>
<rect x="496.7" y="349" width="1" height="2.5" fill="#303030"/>
<rect x="500.6" y="349" width="1" height="4" fill="#303030"/>
<rect x="504.6" y="349" width="1" height="2.5" fill="#303030"/>
<rect x="508.5" y="349" width="1" height="4" fill="#303030"/>
<rect x="512.4" y="349" width="1" height="2.5" fill="#303030"/>
<rect x="516.4" y="349" width="1" height="4" fill="#303030"/>
<rect x="520.3" y="349" width="1" height="2.5" fill="#303030"/>
<rect x="524.3" y="349" width="1" height="4" fill="#303030"/>
<rect x="528.2" y="349" width="1" height="2.5" fill="#303030"/>
<rect x="532.2" y="349" width="1" height="4" fill="#303030"/>
<rect x="536.1" y="349" width="1" height="2.5" fill="#303030"/>
<rect x="540.0" y="349" width="1" height="4" fill="#303030"/>
<rect x="544.0" y="349" width="1" height="2.5" fill="#303030"/>
<rect x="547.9" y="349" width="1" height="4" fill="#303030"/>
<rect x="551.9" y="349" width="1" height="2.5" fill="#303030"/>
<rect x="555.8" y="349" width="1" height="4" fill="#303030"/>
<rect x="559.8" y="349" width="1" height="2.5" fill="#303030"/>
<rect x="563.7" y="349" width="1" height="4" fill="#303030"/>
<rect x="567.6" y="349" width="1" height="2.5" fill="#303030"/>
<rect x="571.6" y="349" width="1" height="4" fill="#303030"/>
<rect x="575.5" y="349" width="1" height="2.5" fill="#303030"/>
<rect x="579.5" y="349" width="1" height="4" fill="#303030"/>
</svg>
<svg style="position:absolute;left:0;top:0" width="615" height="400">
<rect x="580" y="167.30" width="4.2" height="1.3" fill="#262626"/>
<rect x="580" y="163.36" width="2.6" height="1.3" fill="#262626"/>
<rect x="580" y="159.41" width="2.6" height="1.3" fill="#262626"/>
<rect x="580" y="155.47" width="2.6" height="1.3" fill="#262626"/>
<rect x="580" y="151.53" width="4.2" height="1.3" fill="#262626"/>
<rect x="580" y="147.59" width="2.6" height="1.3" fill="#262626"/>
<rect x="580" y="143.64" width="2.6" height="1.3" fill="#262626"/>
<rect x="580" y="139.70" width="2.6" height="1.3" fill="#262626"/>
<rect x="580" y="135.76" width="4.2" height="1.3" fill="#262626"/>
<rect x="580" y="131.81" width="2.6" height="1.3" fill="#262626"/>
<rect x="580" y="127.87" width="2.6" height="1.3" fill="#262626"/>
<rect x="580" y="123.93" width="2.6" height="1.3" fill="#262626"/>
<rect x="580" y="119.98" width="4.2" height="1.3" fill="#262626"/>
<rect x="580" y="116.04" width="2.6" height="1.3" fill="#262626"/>
<rect x="580" y="112.10" width="2.6" height="1.3" fill="#262626"/>
<rect x="580" y="108.15" width="2.6" height="1.3" fill="#262626"/>
<rect x="580" y="104.21" width="4.2" height="1.3" fill="#262626"/>
<rect x="580" y="100.27" width="2.6" height="1.3" fill="#262626"/>
<rect x="580" y="96.33" width="2.6" height="1.3" fill="#262626"/>
<rect x="580" y="92.38" width="2.6" height="1.3" fill="#262626"/>
<rect x="580" y="88.44" width="4.2" height="1.3" fill="#262626"/>
<rect x="580" y="84.50" width="2.6" height="1.3" fill="#262626"/>
<rect x="580" y="80.55" width="2.6" height="1.3" fill="#262626"/>
<rect x="580" y="76.61" width="2.6" height="1.3" fill="#262626"/>
<rect x="580" y="72.67" width="4.2" height="1.3" fill="#262626"/>
<rect x="580" y="68.72" width="2.6" height="1.3" fill="#262626"/>
<rect x="580" y="64.78" width="2.6" height="1.3" fill="#262626"/>
<rect x="580" y="60.84" width="2.6" height="1.3" fill="#262626"/>
<rect x="580" y="56.90" width="4.2" height="1.3" fill="#262626"/>
<rect x="580" y="52.95" width="2.6" height="1.3" fill="#262626"/>
<rect x="580" y="287.30" width="4.2" height="1.3" fill="#262626"/>
<rect x="580" y="283.36" width="2.6" height="1.3" fill="#262626"/>
<rect x="580" y="279.41" width="2.6" height="1.3" fill="#262626"/>
<rect x="580" y="275.47" width="2.6" height="1.3" fill="#262626"/>
<rect x="580" y="271.53" width="4.2" height="1.3" fill="#262626"/>
<rect x="580" y="267.59" width="2.6" height="1.3" fill="#262626"/>
<rect x="580" y="263.64" width="2.6" height="1.3" fill="#262626"/>
<rect x="580" y="259.70" width="2.6" height="1.3" fill="#262626"/>
<rect x="580" y="255.76" width="4.2" height="1.3" fill="#262626"/>
<rect x="580" y="251.81" width="2.6" height="1.3" fill="#262626"/>
<rect x="580" y="247.87" width="2.6" height="1.3" fill="#262626"/>
<rect x="580" y="243.93" width="2.6" height="1.3" fill="#262626"/>
<rect x="580" y="239.98" width="4.2" height="1.3" fill="#262626"/>
<rect x="580" y="236.04" width="2.6" height="1.3" fill="#262626"/>
<rect x="580" y="232.10" width="2.6" height="1.3" fill="#262626"/>
<rect x="580" y="228.16" width="2.6" height="1.3" fill="#262626"/>
<rect x="580" y="224.21" width="4.2" height="1.3" fill="#262626"/>
<rect x="580" y="220.27" width="2.6" height="1.3" fill="#262626"/>
<rect x="580" y="216.33" width="2.6" height="1.3" fill="#262626"/>
<rect x="580" y="212.38" width="2.6" height="1.3" fill="#262626"/>
<rect x="580" y="208.44" width="4.2" height="1.3" fill="#262626"/>
<rect x="580" y="204.50" width="2.6" height="1.3" fill="#262626"/>
<rect x="580" y="200.55" width="2.6" height="1.3" fill="#262626"/>
<rect x="580" y="196.61" width="2.6" height="1.3" fill="#262626"/>
<rect x="580" y="192.67" width="4.2" height="1.3" fill="#262626"/>
<rect x="580" y="188.73" width="2.6" height="1.3" fill="#262626"/>
<rect x="580" y="184.78" width="2.6" height="1.3" fill="#262626"/>
<rect x="580" y="180.84" width="2.6" height="1.3" fill="#262626"/>
<rect x="580" y="176.90" width="4.2" height="1.3" fill="#262626"/>
<rect x="580" y="172.95" width="2.6" height="1.3" fill="#262626"/>
<rect x="580" y="348.30" width="4.2" height="1.3" fill="#262626"/>
<rect x="580" y="344.36" width="2.6" height="1.3" fill="#262626"/>
<rect x="580" y="340.41" width="2.6" height="1.3" fill="#262626"/>
<rect x="580" y="336.47" width="2.6" height="1.3" fill="#262626"/>
<rect x="580" y="332.53" width="4.2" height="1.3" fill="#262626"/>
<rect x="580" y="328.59" width="2.6" height="1.3" fill="#262626"/>
<rect x="580" y="324.64" width="2.6" height="1.3" fill="#262626"/>
<rect x="580" y="320.70" width="2.6" height="1.3" fill="#262626"/>
<rect x="580" y="316.76" width="4.2" height="1.3" fill="#262626"/>
<rect x="580" y="312.81" width="2.6" height="1.3" fill="#262626"/>
<rect x="580" y="308.87" width="2.6" height="1.3" fill="#262626"/>
<rect x="580" y="304.93" width="2.6" height="1.3" fill="#262626"/>
<rect x="580" y="300.98" width="4.2" height="1.3" fill="#262626"/>
<rect x="580" y="297.04" width="2.6" height="1.3" fill="#262626"/>
<rect x="580" y="293.10" width="2.6" height="1.3" fill="#262626"/>
<text x="587" y="169.50" font-family="Liberation Sans" font-size="6.9" fill="#20202a" textLength="17.4" lengthAdjust="spacingAndGlyphs">0.000</text>
<text x="587" y="137.96" font-family="Liberation Sans" font-size="6.9" fill="#20202a" textLength="17.4" lengthAdjust="spacingAndGlyphs">0.267</text>
<text x="587" y="122.18" font-family="Liberation Sans" font-size="6.9" fill="#20202a" textLength="17.4" lengthAdjust="spacingAndGlyphs">0.400</text>
<text x="587" y="106.41" font-family="Liberation Sans" font-size="6.9" fill="#20202a" textLength="17.4" lengthAdjust="spacingAndGlyphs">0.533</text>
<text x="587" y="90.64" font-family="Liberation Sans" font-size="6.9" fill="#20202a" textLength="17.4" lengthAdjust="spacingAndGlyphs">0.667</text>
<text x="587" y="74.87" font-family="Liberation Sans" font-size="6.9" fill="#20202a" textLength="17.4" lengthAdjust="spacingAndGlyphs">0.800</text>
<text x="587" y="59.10" font-family="Liberation Sans" font-size="6.9" fill="#20202a" textLength="17.4" lengthAdjust="spacingAndGlyphs">0.933</text>
<text x="587" y="153.73" font-family="Liberation Sans" font-size="6.9" fill="#20202a" textLength="17.4" lengthAdjust="spacingAndGlyphs">0.133</text>
<text x="587" y="289.50" font-family="Liberation Sans" font-size="6.9" fill="#20202a" textLength="13.6" lengthAdjust="spacingAndGlyphs">0.00</text>
<text x="587" y="273.73" font-family="Liberation Sans" font-size="6.9" fill="#20202a" textLength="13.6" lengthAdjust="spacingAndGlyphs">0.13</text>
<text x="587" y="257.96" font-family="Liberation Sans" font-size="6.9" fill="#20202a" textLength="13.6" lengthAdjust="spacingAndGlyphs">0.27</text>
<text x="587" y="242.18" font-family="Liberation Sans" font-size="6.9" fill="#20202a" textLength="13.6" lengthAdjust="spacingAndGlyphs">0.40</text>
<text x="587" y="226.41" font-family="Liberation Sans" font-size="6.9" fill="#20202a" textLength="13.6" lengthAdjust="spacingAndGlyphs">0.53</text>
<text x="587" y="194.87" font-family="Liberation Sans" font-size="6.9" fill="#20202a" textLength="13.6" lengthAdjust="spacingAndGlyphs">0.80</text>
<text x="587" y="334.23" font-family="Liberation Sans" font-size="6.9" fill="#20202a" textLength="7.2" lengthAdjust="spacingAndGlyphs">99</text>
<text x="588" y="318.46" font-family="Liberation Sans" font-size="6.9" fill="#20202a" textLength="11.0" lengthAdjust="spacingAndGlyphs">197</text>
<text x="588" y="302.68" font-family="Liberation Sans" font-size="6.9" fill="#20202a" textLength="11.0" lengthAdjust="spacingAndGlyphs">296</text>
<path d="M580.5,156.7 L585.5,151.4 L605.5,151.4 L605.5,162.0 L585.5,162.0 Z" fill="#ff0000" stroke="#3a0000" stroke-width="1"/>
<text x="586" y="159.1" font-family="Liberation Sans" font-size="6.9" fill="#5a0000">0.090</text>
<path d="M580.5,209.3 L585.5,204.0 L601.5,204.0 L601.5,214.6 L585.5,214.6 Z" fill="#3cb371" stroke="#14402a" stroke-width="1"/>
<text x="586" y="211.7" font-family="Liberation Sans" font-size="6.9" fill="#10301a">0.69</text>
<path d="M580.5,230.7 L585.5,225.4 L601.5,225.4 L601.5,236.0 L585.5,236.0 Z" fill="#00ff00" stroke="#0a4a0a" stroke-width="1"/>
<text x="586" y="233.1" font-family="Liberation Sans" font-size="6.9" fill="#064006">0.50</text>
<path d="M580.5,304.0 L585.5,299.3 L599.5,299.3 L599.5,308.7 L585.5,308.7 Z" fill="#22a022" stroke="#0a3a0a" stroke-width="1"/>
<text x="586" y="306.4" font-family="Liberation Sans" font-size="6.9" fill="#7cf07c">299</text>
<path d="M580.5,349.0 L585.5,344.3 L591.5,344.3 L591.5,353.7 L585.5,353.7 Z" fill="#cc66dd" stroke="#3a1a40" stroke-width="1"/>
<text x="586" y="351.4" font-family="Liberation Sans" font-size="6.9" fill="#ffffff">0</text>
<text transform="translate(6.9,355) rotate(-90)" text-anchor="end" font-family="Liberation Sans" font-size="7.0" fill="#262630" textLength="3.67" lengthAdjust="spacingAndGlyphs">7</text>
<text transform="translate(14.8,355) rotate(-90)" text-anchor="end" font-family="Liberation Sans" font-size="7.0" fill="#262630" textLength="7.34" lengthAdjust="spacingAndGlyphs">33</text>
<text transform="translate(22.7,355) rotate(-90)" text-anchor="end" font-family="Liberation Sans" font-size="7.0" fill="#262630" textLength="7.34" lengthAdjust="spacingAndGlyphs">57</text>
<text transform="translate(30.6,355) rotate(-90)" text-anchor="end" font-family="Liberation Sans" font-size="7.0" fill="#262630" textLength="7.34" lengthAdjust="spacingAndGlyphs">80</text>
<text transform="translate(38.4,355) rotate(-90)" text-anchor="end" font-family="Liberation Sans" font-size="7.0" fill="#262630" textLength="7.34" lengthAdjust="spacingAndGlyphs">86</text>
<text transform="translate(46.3,355) rotate(-90)" text-anchor="end" font-family="Liberation Sans" font-size="7.0" fill="#262630" textLength="7.34" lengthAdjust="spacingAndGlyphs">94</text>
<text transform="translate(54.2,355) rotate(-90)" text-anchor="end" font-family="Liberation Sans" font-size="7.0" fill="#262630" textLength="11.01" lengthAdjust="spacingAndGlyphs">101</text>
<text transform="translate(62.1,355) rotate(-90)" text-anchor="end" font-family="Liberation Sans" font-size="7.0" fill="#262630" textLength="11.01" lengthAdjust="spacingAndGlyphs">108</text>
<text transform="translate(70.0,355) rotate(-90)" text-anchor="end" font-family="Liberation Sans" font-size="7.0" fill="#262630" textLength="11.01" lengthAdjust="spacingAndGlyphs">115</text>
<text transform="translate(77.9,355) rotate(-90)" text-anchor="end" font-family="Liberation Sans" font-size="7.0" fill="#262630" textLength="11.01" lengthAdjust="spacingAndGlyphs">123</text>
<text transform="translate(85.8,355) rotate(-90)" text-anchor="end" font-family="Liberation Sans" font-size="7.0" fill="#262630" textLength="11.01" lengthAdjust="spacingAndGlyphs">130</text>
<text transform="translate(93.6,355) rotate(-90)" text-anchor="end" font-family="Liberation Sans" font-size="7.0" fill="#262630" textLength="11.01" lengthAdjust="spacingAndGlyphs">137</text>
<text transform="translate(101.5,355) rotate(-90)" text-anchor="end" font-family="Liberation Sans" font-size="7.0" fill="#262630" textLength="11.01" lengthAdjust="spacingAndGlyphs">144</text>
<text transform="translate(109.4,355) rotate(-90)" text-anchor="end" font-family="Liberation Sans" font-size="7.0" fill="#262630" textLength="11.01" lengthAdjust="spacingAndGlyphs">151</text>
<text transform="translate(117.3,355) rotate(-90)" text-anchor="end" font-family="Liberation Sans" font-size="7.0" fill="#262630" textLength="11.01" lengthAdjust="spacingAndGlyphs">159</text>
<text transform="translate(125.2,355) rotate(-90)" text-anchor="end" font-family="Liberation Sans" font-size="7.0" fill="#262630" textLength="11.01" lengthAdjust="spacingAndGlyphs">166</text>
<text transform="translate(133.1,355) rotate(-90)" text-anchor="end" font-family="Liberation Sans" font-size="7.0" fill="#262630" textLength="11.01" lengthAdjust="spacingAndGlyphs">173</text>
<text transform="translate(141.0,355) rotate(-90)" text-anchor="end" font-family="Liberation Sans" font-size="7.0" fill="#262630" textLength="11.01" lengthAdjust="spacingAndGlyphs">180</text>
<text transform="translate(148.8,355) rotate(-90)" text-anchor="end" font-family="Liberation Sans" font-size="7.0" fill="#262630" textLength="11.01" lengthAdjust="spacingAndGlyphs">187</text>
<text transform="translate(156.7,355) rotate(-90)" text-anchor="end" font-family="Liberation Sans" font-size="7.0" fill="#262630" textLength="11.01" lengthAdjust="spacingAndGlyphs">194</text>
<text transform="translate(164.6,355) rotate(-90)" text-anchor="end" font-family="Liberation Sans" font-size="7.0" fill="#262630" textLength="11.01" lengthAdjust="spacingAndGlyphs">201</text>
<text transform="translate(172.5,355) rotate(-90)" text-anchor="end" font-family="Liberation Sans" font-size="7.0" fill="#262630" textLength="11.01" lengthAdjust="spacingAndGlyphs">208</text>
<text transform="translate(180.4,355) rotate(-90)" text-anchor="end" font-family="Liberation Sans" font-size="7.0" fill="#262630" textLength="11.01" lengthAdjust="spacingAndGlyphs">215</text>
<text transform="translate(188.3,355) rotate(-90)" text-anchor="end" font-family="Liberation Sans" font-size="7.0" fill="#262630" textLength="11.01" lengthAdjust="spacingAndGlyphs">223</text>
<text transform="translate(196.2,355) rotate(-90)" text-anchor="end" font-family="Liberation Sans" font-size="7.0" fill="#262630" textLength="11.01" lengthAdjust="spacingAndGlyphs">229</text>
<text transform="translate(204.1,355) rotate(-90)" text-anchor="end" font-family="Liberation Sans" font-size="7.0" fill="#262630" textLength="11.01" lengthAdjust="spacingAndGlyphs">236</text>
<text transform="translate(211.9,355) rotate(-90)" text-anchor="end" font-family="Liberation Sans" font-size="7.0" fill="#262630" textLength="11.01" lengthAdjust="spacingAndGlyphs">243</text>
<text transform="translate(219.8,355) rotate(-90)" text-anchor="end" font-family="Liberation Sans" font-size="7.0" fill="#262630" textLength="11.01" lengthAdjust="spacingAndGlyphs">251</text>
<text transform="translate(227.7,355) rotate(-90)" text-anchor="end" font-family="Liberation Sans" font-size="7.0" fill="#262630" textLength="11.01" lengthAdjust="spacingAndGlyphs">258</text>
<text transform="translate(235.6,355) rotate(-90)" text-anchor="end" font-family="Liberation Sans" font-size="7.0" fill="#262630" textLength="11.01" lengthAdjust="spacingAndGlyphs">265</text>
<text transform="translate(243.5,355) rotate(-90)" text-anchor="end" font-family="Liberation Sans" font-size="7.0" fill="#262630" textLength="11.01" lengthAdjust="spacingAndGlyphs">272</text>
<text transform="translate(251.4,355) rotate(-90)" text-anchor="end" font-family="Liberation Sans" font-size="7.0" fill="#262630" textLength="11.01" lengthAdjust="spacingAndGlyphs">280</text>
<text transform="translate(259.3,355) rotate(-90)" text-anchor="end" font-family="Liberation Sans" font-size="7.0" fill="#262630" textLength="11.01" lengthAdjust="spacingAndGlyphs">287</text>
<text transform="translate(267.1,355) rotate(-90)" text-anchor="end" font-family="Liberation Sans" font-size="7.0" fill="#262630" textLength="11.01" lengthAdjust="spacingAndGlyphs">294</text>
<text transform="translate(275.0,355) rotate(-90)" text-anchor="end" font-family="Liberation Sans" font-size="7.0" fill="#262630" textLength="11.01" lengthAdjust="spacingAndGlyphs">302</text>
<text transform="translate(282.9,355) rotate(-90)" text-anchor="end" font-family="Liberation Sans" font-size="7.0" fill="#262630" textLength="11.01" lengthAdjust="spacingAndGlyphs">309</text>
<text transform="translate(290.8,355) rotate(-90)" text-anchor="end" font-family="Liberation Sans" font-size="7.0" fill="#262630" textLength="11.01" lengthAdjust="spacingAndGlyphs">316</text>
<text transform="translate(298.7,355) rotate(-90)" text-anchor="end" font-family="Liberation Sans" font-size="7.0" fill="#262630" textLength="11.01" lengthAdjust="spacingAndGlyphs">323</text>
<text transform="translate(306.6,355) rotate(-90)" text-anchor="end" font-family="Liberation Sans" font-size="7.0" fill="#262630" textLength="11.01" lengthAdjust="spacingAndGlyphs">330</text>
<text transform="translate(314.5,355) rotate(-90)" text-anchor="end" font-family="Liberation Sans" font-size="7.0" fill="#262630" textLength="11.01" lengthAdjust="spacingAndGlyphs">337</text>
<text transform="translate(322.3,355) rotate(-90)" text-anchor="end" font-family="Liberation Sans" font-size="7.0" fill="#262630" textLength="11.01" lengthAdjust="spacingAndGlyphs">345</text>
<text transform="translate(330.2,355) rotate(-90)" text-anchor="end" font-family="Liberation Sans" font-size="7.0" fill="#262630" textLength="11.01" lengthAdjust="spacingAndGlyphs">352</text>
<text transform="translate(338.1,355) rotate(-90)" text-anchor="end" font-family="Liberation Sans" font-size="7.0" fill="#262630" textLength="11.01" lengthAdjust="spacingAndGlyphs">359</text>
<text transform="translate(346.0,355) rotate(-90)" text-anchor="end" font-family="Liberation Sans" font-size="7.0" fill="#262630" textLength="11.01" lengthAdjust="spacingAndGlyphs">366</text>
<text transform="translate(353.9,355) rotate(-90)" text-anchor="end" font-family="Liberation Sans" font-size="7.0" fill="#262630" textLength="11.01" lengthAdjust="spacingAndGlyphs">373</text>
<text transform="translate(361.8,355) rotate(-90)" text-anchor="end" font-family="Liberation Sans" font-size="7.0" fill="#262630" textLength="11.01" lengthAdjust="spacingAndGlyphs">381</text>
<text transform="translate(369.7,355) rotate(-90)" text-anchor="end" font-family="Liberation Sans" font-size="7.0" fill="#262630" textLength="11.01" lengthAdjust="spacingAndGlyphs">388</text>
<text transform="translate(377.5,355) rotate(-90)" text-anchor="end" font-family="Liberation Sans" font-size="7.0" fill="#262630" textLength="11.01" lengthAdjust="spacingAndGlyphs">395</text>
<text transform="translate(385.4,355) rotate(-90)" text-anchor="end" font-family="Liberation Sans" font-size="7.0" fill="#262630" textLength="11.01" lengthAdjust="spacingAndGlyphs">404</text>
<text transform="translate(393.3,355) rotate(-90)" text-anchor="end" font-family="Liberation Sans" font-size="7.0" fill="#262630" textLength="11.01" lengthAdjust="spacingAndGlyphs">410</text>
<text transform="translate(401.2,355) rotate(-90)" text-anchor="end" font-family="Liberation Sans" font-size="7.0" fill="#262630" textLength="11.01" lengthAdjust="spacingAndGlyphs">417</text>
<text transform="translate(409.1,355) rotate(-90)" text-anchor="end" font-family="Liberation Sans" font-size="7.0" fill="#262630" textLength="11.01" lengthAdjust="spacingAndGlyphs">425</text>
<text transform="translate(417.0,355) rotate(-90)" text-anchor="end" font-family="Liberation Sans" font-size="7.0" fill="#262630" textLength="11.01" lengthAdjust="spacingAndGlyphs">432</text>
<text transform="translate(424.9,355) rotate(-90)" text-anchor="end" font-family="Liberation Sans" font-size="7.0" fill="#262630" textLength="11.01" lengthAdjust="spacingAndGlyphs">439</text>
</svg>





<div style="position:absolute;left:0;top:393px;width:615px;height:17px;background:#f0f0f0"></div>
<div style="position:absolute;left:0;top:397px;width:615px;height:13px;background:#f0f0f0"></div>
<div style="position:absolute;left:548px;top:397px;width:59px;height:11px;background:#cdcdcd"></div>
<svg style="position:absolute;left:0;top:393px" width="20" height="17"><path d="M7.5,7.5 L4.5,10.5 L7.5,13.5" fill="none" stroke="#444" stroke-width="1.5"/></svg>
<svg style="position:absolute;left:605px;top:393px" width="12" height="17"><path d="M7,7.5 L10,10.5 L7,13.5" fill="none" stroke="#444" stroke-width="1.5"/></svg>
<div style="position:absolute;left:0;top:410px;width:615px;height:20px;background:#fafafa"></div>
<div style="position:absolute;left:0;top:410px;width:615px;height:19px;background:#f5f5f5"></div>
<div style="position:absolute;left:4px;top:410px;width:245px;height:19px;background:#fbfbfb;border-top-right-radius:3px"></div>
<div style="position:absolute;left:249px;top:413px;width:1px;height:15px;background:#b8b8b8"></div>
<svg style="position:absolute;left:0;top:405px" width="260" height="25">
<g fill="#a0a0a0"><rect x="6.5" y="8" width="1.2" height="1.2"/><rect x="6.5" y="11" width="1.2" height="1.2"/><rect x="6.5" y="14" width="1.2" height="1.2"/><rect x="6.5" y="17" width="1.2" height="1.2"/></g>
<path d="M17,9.5 L24,14.5 L17,19.5 Z" fill="#a8a8a8"/><path d="M22.5,7.5 q2.5,-1.5 3.5,0.5 q0.5,1.5 -1.5,2.5" fill="none" stroke="#a8a8a8" stroke-width="0.9"/>
<path d="M35,9.5 L42,14.5 L35,19.5 Z" fill="#a8a8a8"/><path d="M39.5,16.5 L44.5,16.5 M42,16.5 L42,20.5" stroke="#9a9a9a" stroke-width="1.2"/>
<rect x="53.5" y="11.3" width="5.5" height="5.5" fill="#e01020" stroke="#9a0010" stroke-width="0.6"/>
<rect x="68" y="9" width="1" height="11" fill="#c8c8c8"/>
<text x="72" y="17.2" font-family="Liberation Sans" font-weight="bold" font-size="5.5" fill="#3caa3c">r</text><text x="75" y="16" font-family="Liberation Sans" font-size="4" fill="#3caa3c">→</text><text x="79.5" y="17.6" font-family="Liberation Sans" font-weight="bold" font-size="7" fill="#3a48c8">S</text>
<text x="90.5" y="17.2" font-family="Liberation Sans" font-weight="bold" font-size="5.5" fill="#3caa3c">r</text><text x="93.5" y="16" font-family="Liberation Sans" font-size="4" fill="#3caa3c">→</text><text x="98" y="17.6" font-family="Liberation Sans" font-weight="bold" font-size="7" fill="#3a48c8">T</text>
<rect x="109" y="9" width="1" height="11" fill="#c8c8c8"/>
<rect x="114" y="9" width="7" height="2" fill="#1a2a3a"/><rect x="114" y="12" width="7" height="2" fill="#1a2a3a"/><rect x="118" y="16" width="5" height="2.5" fill="#2a6ab0"/><rect x="120" y="19" width="5" height="2.5" fill="#9ac83a" stroke="#2a2a2a" stroke-width="0.5"/>
<rect x="132" y="9" width="7" height="2" fill="#8a8a8a"/><rect x="132" y="12" width="7" height="2" fill="#8a8a8a"/><rect x="135" y="16" width="5" height="2.5" fill="#9a9a9a"/><rect x="136" y="19" width="5" height="2.5" fill="#aaaaaa"/><rect x="140.5" y="9" width="3.5" height="10" rx="1.7" fill="none" stroke="#3cb03c" stroke-width="1"/>
<rect x="150" y="9" width="1" height="11" fill="#c8c8c8"/>
<text x="155.5" y="17.8" font-family="Liberation Sans" font-weight="bold" font-size="7.8" fill="#5050c8" textLength="9.6" lengthAdjust="spacingAndGlyphs">LR</text>
<rect x="172.5" y="9" width="1" height="11" fill="#c8c8c8"/>
<rect x="178.5" y="9.5" width="10.5" height="9" fill="#dfeaf8" stroke="#3a6ab8" stroke-width="1"/><rect x="178.5" y="9.5" width="10.5" height="2" fill="#3a6ab8"/><text x="180" y="17.3" font-family="Liberation Sans" font-size="4.6" fill="#223">OK</text>
<path d="M196,12 L198.5,14 L196,16 Z" fill="#20c020"/><rect x="199" y="9.5" width="8.5" height="2.6" fill="#1a3040"/><rect x="199" y="13" width="8.5" height="2.4" fill="#40c8c0"/><rect x="199" y="16.3" width="8.5" height="2.6" fill="#1a3040"/>
<circle cx="219.5" cy="12.5" r="4" fill="#c8c8c8"/><text x="215.3" y="20.3" font-family="Liberation Sans" font-size="3.6" fill="#b0b0b0">NAN</text>
<path d="M234.2,10.5 L237.8,14.3 L234.2,18 Z" fill="#d03030" stroke="#901818" stroke-width="0.6"/><rect x="239" y="10.3" width="3" height="7.8" fill="#d83838" stroke="#901818" stroke-width="0.6"/>
</svg>

<div style="position:absolute;left:51px;top:437px;width:167px;height:11px;background:#e6e6e6;border:1px solid #bcbcbc;box-sizing:border-box"></div>
<div style="position:absolute;left:52px;top:438px;width:121px;height:9px;background:#06b025"></div>
<div style="position:absolute;left:224px;top:436.5px;width:43px;height:12.5px;background:#000"></div>

<div style="position:absolute;left:272px;top:436.5px;width:343px;height:12.5px;background:#000"></div>

<div style="position:absolute;left:54.6px;top:459px;width:10.5px;height:10.6px;background:#00ff00"></div>
<div style="position:absolute;left:109.4px;top:459px;width:10.5px;height:10.6px;background:#00ff00"></div>
<div style="position:absolute;left:163px;top:459px;width:10.5px;height:10.6px;background:#a8a8a8"></div>
<div style="position:absolute;left:217.6px;top:459px;width:10.5px;height:10.6px;background:#a8a8a8"></div>
<div style="position:absolute;left:277px;top:458px;width:11px;height:11px;background:#fff;border:1px solid #333;box-sizing:border-box"></div>






<svg style="position:absolute;left:425px;top:452px" width="120" height="24"><circle cx="11.6" cy="11.75" r="5" fill="#f4f4f4" stroke="#c0c0c0" stroke-width="1"/><circle cx="11.6" cy="11.75" r="2.3" fill="#b0b0b0"/><circle cx="63" cy="11.75" r="5" fill="#fff" stroke="#c0c0c0" stroke-width="1"/></svg>


<div style="position:absolute;left:0;top:481px;width:615px;height:1px;background:#c8c8c8"></div>
<div style="position:absolute;left:615px;top:0;width:4px;height:484px;background:#e8e8e8"></div>
<div style="position:absolute;left:615px;top:0;width:1px;height:484px;background:#9a9a9a"></div>
<div style="position:absolute;left:874px;top:0;width:150px;height:484px;background:linear-gradient(90deg,#dcdce0 0px,#e8e8ec 8px,#ececf0 100%)"></div>
<div style="position:absolute;left:619px;top:0;width:255px;height:484px;background:#dcdcdc"></div>
<div style="position:absolute;left:619px;top:0;width:255px;height:13.5px;background:#6e6e6e"></div>

<svg style="position:absolute;left:830px;top:0" width="44" height="14">
<path d="M6,7 L12.5,7 L9.25,10.2 Z" fill="#000"/>
<rect x="20.8" y="4.5" width="3.6" height="4.6" fill="#5a5a5a" stroke="#000" stroke-width="0.9"/><rect x="20.3" y="8.6" width="4.8" height="1" fill="#000"/><rect x="22.2" y="9.5" width="1" height="2.6" fill="#000"/>
<path d="M32.5,4.5 L39,11 M39,4.5 L32.5,11" stroke="#000" stroke-width="1.3"/>
</svg>
<div style="position:absolute;left:619px;top:466px;width:255px;height:18px;background:linear-gradient(#d8d8d8,#dedede)"></div>
<div style="position:absolute;left:619px;top:465px;width:64.5px;height:17px;background:linear-gradient(#f4f4f4,#e4e4e4);border:1px solid #b8b8b8;border-top:none;border-radius:0 0 3px 3px;box-sizing:border-box"></div>
<svg style="position:absolute;left:619px;top:466px" width="255" height="18">
<rect x="2.5" y="5.5" width="9" height="8" fill="#fff" stroke="#333" stroke-width="1"/><rect x="4" y="8" width="6" height="1" fill="#333"/><rect x="4" y="10.5" width="6" height="1" fill="#333"/><path d="M6,5 L12,2 L12,5" fill="#fff" stroke="#333" stroke-width="1"/><rect x="12" y="1" width="1.5" height="5" fill="#1a3ab0"/>
<path d="M68.2,7.6 L74.2,12.9" stroke="#333" stroke-width="1.5"/><path d="M66.3,5.2 Q65.8,8.2 68.6,7.9" fill="none" stroke="#333" stroke-width="1.1"/><path d="M66.6,12.9 L73.2,6.3" stroke="#6a1414" stroke-width="1.4"/><path d="M70.6,4.6 L73.4,2.6 L77.6,5.8 L75.6,7.2 Z" fill="#c8b020" stroke="#2a2a10" stroke-width="0.6"/>
<rect x="119" y="2" width="1" height="12" fill="#777"/>
<rect x="121.5" y="2" width="4" height="3" fill="#2040c0"/><rect x="121.5" y="6" width="6.5" height="5" fill="#40e040" stroke="#206020" stroke-width="0.6"/><rect x="121.5" y="12" width="4.5" height="2.5" fill="#c040e0"/><rect x="127.5" y="10" width="4" height="4.5" fill="#e02020"/>
<rect x="183" y="2" width="1" height="12" fill="#777"/>
<rect x="185.5" y="3.5" width="10" height="9" fill="#e8eef8" stroke="#5070a8" stroke-width="1"/><text x="186.8" y="10.6" font-family="Liberation Sans" font-size="4.2" fill="#223">OK</text>
<rect x="232.5" y="2" width="1" height="12" fill="#777"/>
</svg>




<div style="position:absolute;left:617px;top:18px;width:405px;height:448px;background:#fff;border:1px solid #8c8c8c;box-sizing:border-box;box-shadow:0 1px 7px rgba(0,0,0,0.22)"></div>
<svg style="position:absolute;left:624px;top:23px" width="14" height="14">
<rect x="0" y="0.5" width="13" height="12.7" rx="2" fill="#2f4a5a"/>
<path d="M2.5,4 Q7,6 11,6.5" stroke="#2ab0e8" stroke-width="1.4" fill="none"/>
<path d="M2.5,6.5 L11,6.5" stroke="#8ac040" stroke-width="1.2"/>
<path d="M2.5,10 Q7,7.5 11,6.5" stroke="#f0a020" stroke-width="1.4" fill="none"/>
</svg>

<svg style="position:absolute;left:1004px;top:24px" width="12" height="12"><path d="M1.8,1.8 L10.2,10.2 M10.2,1.8 L1.8,10.2" stroke="#222" stroke-width="1"/></svg>
<svg style="position:absolute;left:0;top:0" width="1024" height="484">
<rect x="618.5" y="126.5" width="403" height="236" fill="#f0ffff"/>
<line x1="618.5" y1="126" x2="618.5" y2="363" stroke="#7a9cc0" stroke-width="1"/>
<line x1="618" y1="126.5" x2="1021.5" y2="126.5" stroke="#76a0c8" stroke-width="1.2"/>
<line x1="618" y1="362.5" x2="1021.5" y2="362.5" stroke="#90b4d6" stroke-width="1.4"/>
<path d="M632.5,245.3 L684.5,245.3 L684.5,215 C686.45,141.13 687.18,108.97 687.70,95.30 C688.22,81.63 688.88,73.13 689.30,68.30 C689.72,63.47 689.97,66.10 690.20,66.30 C690.43,66.50 690.53,68.08 690.70,69.53 C690.87,70.98 691.03,72.86 691.20,74.98 C691.37,77.11 691.53,79.62 691.70,82.29 C691.87,84.96 692.03,87.95 692.20,91.02 C692.37,94.10 692.53,97.41 692.70,100.73 C692.87,104.04 693.03,107.52 693.20,110.93 C693.37,114.33 693.53,117.82 693.70,121.17 C693.87,124.52 694.03,127.87 694.20,131.02 C694.37,134.18 694.53,137.26 694.70,140.10 C694.87,142.94 695.03,145.64 695.20,148.07 C695.37,150.50 695.53,152.73 695.70,154.68 C695.87,156.62 696.03,158.33 696.20,159.74 C696.37,161.15 696.53,162.29 696.70,163.15 C696.87,164.00 697.03,164.57 697.20,164.87 C697.37,165.17 697.53,165.18 697.70,164.96 C697.87,164.73 698.03,164.22 698.20,163.52 C698.37,162.81 698.53,161.84 698.70,160.72 C698.87,159.59 699.03,158.24 699.20,156.78 C699.37,155.31 699.53,153.66 699.70,151.94 C699.87,150.23 700.03,148.37 700.20,146.50 C700.37,144.62 700.53,142.65 700.70,140.71 C700.87,138.78 701.03,136.79 701.20,134.87 C701.37,132.96 701.53,131.05 701.70,129.24 C701.87,127.44 702.03,125.68 702.20,124.06 C702.37,122.44 702.53,120.90 702.70,119.52 C702.87,118.15 703.03,116.89 703.20,115.81 C703.37,114.72 703.53,113.78 703.70,113.03 C703.87,112.27 704.03,111.67 704.20,111.26 C704.37,110.84 704.53,110.60 704.70,110.52 C704.87,110.45 705.03,110.55 705.20,110.80 C705.37,111.06 705.53,111.49 705.70,112.05 C705.87,112.61 706.03,113.33 706.20,114.15 C706.37,114.98 706.53,115.95 706.70,117.00 C706.87,118.04 707.03,119.22 707.20,120.43 C707.37,121.65 707.53,122.96 707.70,124.29 C707.87,125.62 708.03,127.02 708.20,128.41 C708.37,129.80 708.53,131.23 708.70,132.62 C708.87,134.01 709.03,135.41 709.20,136.76 C709.37,138.10 709.53,139.42 709.70,140.67 C709.87,141.92 710.03,143.12 710.20,144.24 C710.37,145.35 710.53,146.40 710.70,147.35 C710.87,148.30 711.03,149.17 711.20,149.94 C711.37,150.70 711.53,151.37 711.70,151.94 C711.87,152.51 712.03,152.97 712.20,153.34 C712.37,153.71 712.53,153.97 712.70,154.14 C712.87,154.32 713.03,154.39 713.20,154.38 C713.37,154.38 713.53,154.27 713.70,154.11 C713.87,153.94 714.03,153.69 714.20,153.40 C714.37,153.10 714.53,152.73 714.70,152.33 C714.87,151.93 715.03,151.47 715.20,151.00 C715.37,150.54 715.53,150.03 715.70,149.52 C715.87,149.02 716.03,148.49 716.20,147.99 C716.37,147.49 716.53,146.98 716.70,146.50 C716.87,146.03 717.03,145.56 717.20,145.15 C717.37,144.73 717.53,144.34 717.70,144.01 C717.87,143.68 718.03,143.39 718.20,143.16 C718.37,142.93 718.53,142.75 718.70,142.63 C718.87,142.52 719.03,142.46 719.20,142.47 C719.37,142.48 719.53,142.56 719.70,142.69 C719.87,142.83 720.03,143.03 720.20,143.29 C720.37,143.56 720.53,143.88 720.70,144.26 C720.87,144.64 721.03,145.08 721.20,145.56 C721.37,146.04 721.53,146.58 721.70,147.16 C721.87,147.73 722.03,148.35 722.20,148.99 C722.37,149.64 722.53,150.32 722.70,151.02 C722.87,151.71 723.03,152.44 723.20,153.17 C723.37,153.89 723.53,154.64 723.70,155.38 C723.87,156.11 724.03,156.86 724.20,157.59 C724.37,158.32 724.53,159.04 724.70,159.75 C724.87,160.45 725.03,161.14 725.20,161.80 C725.37,162.46 725.53,163.11 725.70,163.71 C725.87,164.32 726.03,164.90 726.20,165.45 C726.37,165.99 726.53,166.51 726.70,166.98 C726.87,167.46 727.03,167.90 727.20,168.31 C727.37,168.71 727.53,169.08 727.70,169.42 C727.87,169.75 728.03,170.05 728.20,170.32 C728.37,170.59 728.53,170.83 728.70,171.04 C728.87,171.25 729.03,171.43 729.20,171.59 C729.37,171.75 729.53,171.88 729.70,172.00 C729.87,172.12 730.03,172.22 730.20,172.31 C730.37,172.40 730.53,172.48 730.70,172.55 C730.87,172.63 731.03,172.70 731.20,172.77 C731.37,172.84 731.53,172.91 731.70,172.99 C731.87,173.07 732.03,173.15 732.20,173.25 C732.37,173.35 732.53,173.46 732.70,173.58 C732.87,173.71 733.03,173.85 733.20,174.01 C733.37,174.18 733.53,174.36 733.70,174.56 C733.87,174.77 734.03,174.99 734.20,175.24 C734.37,175.49 734.53,175.77 734.70,176.07 C734.87,176.36 735.03,176.69 735.20,177.03 C735.37,177.37 735.53,177.74 735.70,178.13 C735.87,178.52 736.03,178.94 736.20,179.37 C736.37,179.80 736.53,180.25 736.70,180.72 C736.87,181.18 737.03,181.67 737.20,182.17 C737.37,182.66 737.53,183.18 737.70,183.70 C737.87,184.22 738.03,184.75 738.20,185.28 C738.37,185.82 738.53,186.36 738.70,186.90 C738.87,187.45 739.03,187.99 739.20,188.54 C739.37,189.08 739.53,189.62 739.70,190.16 C739.87,190.70 740.03,191.23 740.20,191.76 C740.37,192.28 740.53,192.80 740.70,193.31 C740.87,193.82 741.03,194.32 741.20,194.81 C741.37,195.30 741.53,195.77 741.70,196.24 C741.87,196.70 742.03,197.15 742.20,197.59 C742.37,198.03 742.53,198.46 742.70,198.87 C742.87,199.29 743.03,199.69 743.20,200.08 C743.37,200.47 743.53,200.85 743.70,201.22 C743.87,201.59 744.03,201.94 744.20,202.29 C744.37,202.64 744.53,202.98 744.70,203.32 C744.87,203.65 745.03,203.98 745.20,204.30 C745.37,204.62 745.53,204.94 745.70,205.26 C745.87,205.57 746.03,205.88 746.20,206.20 C746.37,206.51 746.53,206.82 746.70,207.14 C746.87,207.45 747.03,207.77 747.20,208.09 C747.37,208.41 747.53,208.73 747.70,209.06 C747.87,209.39 748.03,209.73 748.20,210.07 C748.37,210.41 748.53,210.76 748.70,211.12 C748.87,211.47 749.03,211.84 749.20,212.21 C749.37,212.59 749.53,212.97 749.70,213.36 C749.87,213.75 750.03,214.15 750.20,214.56 C750.37,214.97 750.53,215.38 750.70,215.81 C750.87,216.23 751.03,216.67 751.20,217.11 C751.37,217.55 751.53,218.00 751.70,218.45 C751.87,218.91 752.03,219.37 752.20,219.84 C752.37,220.31 752.53,220.78 752.70,221.26 C752.87,221.73 753.03,222.21 753.20,222.70 C753.37,223.18 753.53,223.67 753.70,224.15 C753.87,224.64 754.03,225.13 754.20,225.62 C754.37,226.10 754.53,226.59 754.70,227.08 C754.87,227.57 755.03,228.05 755.20,228.54 C755.37,229.02 755.53,229.50 755.70,229.98 C755.87,230.46 756.03,230.93 756.20,231.40 C756.37,231.87 756.53,232.34 756.70,232.80 C756.87,233.26 757.03,233.72 757.20,234.17 C757.37,234.63 757.53,235.07 757.70,235.52 C757.87,235.96 758.03,236.40 758.20,236.83 C758.37,237.27 758.53,237.70 758.70,238.12 C758.87,238.55 759.03,238.97 759.20,239.39 C759.37,239.81 759.53,240.22 759.70,240.63 C759.87,241.04 760.03,241.45 760.20,241.86 C760.37,242.26 760.53,242.66 760.70,243.07 C760.87,243.47 761.03,243.87 761.20,244.27 C761.37,244.67 761.53,245.07 761.70,245.47 C761.87,245.87 762.03,246.27 762.20,246.67 C762.37,247.07 762.53,247.47 762.70,247.87 C762.87,248.28 763.03,248.68 763.20,249.09 C763.37,249.49 763.53,249.90 763.70,250.31 C763.87,250.72 764.03,251.13 764.20,251.55 C764.37,251.96 764.53,252.38 764.70,252.80 C764.87,253.22 765.03,253.65 765.20,254.08 C765.37,254.50 765.53,254.93 765.70,255.36 C765.87,255.79 766.03,256.23 766.20,256.67 C766.37,257.10 766.53,257.54 766.70,257.98 C766.87,258.43 767.03,258.87 767.20,259.31 C767.37,259.76 767.53,260.21 767.70,260.65 C767.87,261.10 768.03,261.55 768.20,262.00 C768.37,262.45 768.53,262.90 768.70,263.35 C768.87,263.80 769.03,264.25 769.20,264.70 C769.37,265.15 769.53,265.60 769.70,266.05 C769.87,266.50 770.03,266.95 770.20,267.40 C770.37,267.84 770.53,268.29 770.70,268.73 C770.87,269.18 771.03,269.62 771.20,270.06 C771.37,270.50 771.53,270.94 771.70,271.37 C771.87,271.81 772.03,272.24 772.20,272.68 C772.37,273.11 772.53,273.54 772.70,273.96 C772.87,274.39 773.03,274.81 773.20,275.24 C773.37,275.66 773.53,276.08 773.70,276.50 C773.87,276.91 774.03,277.33 774.20,277.74 C774.37,278.15 774.53,278.56 774.70,278.97 C774.87,279.38 775.03,279.79 775.20,280.20 C775.37,280.60 775.53,281.00 775.70,281.41 C775.87,281.81 776.03,282.21 776.20,282.61 C776.37,283.01 776.53,283.41 776.70,283.81 C776.87,284.20 777.03,284.60 777.20,285.00 C777.37,285.39 777.53,285.79 777.70,286.19 C777.87,286.58 778.03,286.98 778.20,287.37 C778.37,287.76 778.53,288.16 778.70,288.55 C778.87,288.95 779.03,289.34 779.20,289.74 C779.37,290.13 779.53,290.53 779.70,290.92 C779.87,291.32 780.03,291.71 780.20,292.11 C780.37,292.50 780.53,292.90 780.70,293.29 C780.87,293.69 781.03,294.08 781.20,294.48 C781.37,294.87 781.53,295.27 781.70,295.66 C781.87,296.06 782.03,296.45 782.20,296.85 C782.37,297.24 782.53,297.64 782.70,298.03 C782.87,298.42 783.03,298.82 783.20,299.21 C783.37,299.60 783.53,299.99 783.70,300.38 C783.87,300.78 784.03,301.17 784.20,301.56 C784.37,301.94 784.53,302.33 784.70,302.72 C784.87,303.11 785.03,303.49 785.20,303.88 C785.37,304.26 785.53,304.64 785.70,305.02 C785.87,305.40 786.03,305.78 786.20,306.16 C786.37,306.54 786.53,306.91 786.70,307.29 C786.87,307.66 787.03,308.03 787.20,308.41 C787.37,308.78 787.53,309.14 787.70,309.51 C787.87,309.88 788.03,310.24 788.20,310.60 C788.37,310.97 788.53,311.33 788.70,311.68 C788.87,312.04 789.03,312.40 789.20,312.75 C789.37,313.11 789.53,313.46 789.70,313.81 C789.87,314.16 790.03,314.51 790.20,314.86 C790.37,315.21 790.53,315.55 790.70,315.89 C790.87,316.24 791.03,316.58 791.20,316.92 C791.37,317.26 791.53,317.60 791.70,317.93 C791.87,318.27 792.03,318.61 792.20,318.94 C792.37,319.27 792.53,319.61 792.70,319.94 C792.87,320.27 793.03,320.60 793.20,320.93 C793.37,321.26 793.53,321.58 793.70,321.91 C793.87,322.23 794.03,322.56 794.20,322.88 C794.37,323.20 794.53,323.53 794.70,323.85 C794.87,324.17 795.03,324.49 795.20,324.80 C795.37,325.12 795.53,325.44 795.70,325.75 C795.87,326.07 796.03,326.38 796.20,326.70 C796.37,327.01 796.53,327.32 796.70,327.63 C796.87,327.94 797.03,328.25 797.20,328.56 C797.37,328.87 797.53,329.17 797.70,329.48 C797.87,329.78 798.03,330.09 798.20,330.39 C798.37,330.69 798.53,330.99 798.70,331.29 C798.87,331.59 799.03,331.88 799.20,332.18 C799.37,332.47 799.53,332.77 799.70,333.06 C799.87,333.35 800.03,333.64 800.20,333.93 C800.37,334.22 800.53,334.50 800.70,334.79 C800.87,335.07 801.03,335.35 801.20,335.63 C801.37,335.91 801.53,336.19 801.70,336.47 C801.87,336.74 802.03,337.02 802.20,337.29 C802.37,337.56 802.53,337.83 802.70,338.10 C802.87,338.37 803.03,338.63 803.20,338.89 C803.37,339.16 803.53,339.42 803.70,339.68 C803.87,339.94 804.03,340.19 804.20,340.45 C804.37,340.70 804.53,340.95 804.70,341.20 C804.87,341.46 805.03,341.70 805.20,341.95 C805.37,342.20 805.53,342.44 805.70,342.68 C805.87,342.92 806.03,343.16 806.20,343.40 C806.37,343.64 806.53,343.87 806.70,344.11 C806.87,344.34 807.03,344.57 807.20,344.80 C807.37,345.03 807.53,345.26 807.70,345.48 C807.87,345.71 808.03,345.93 808.20,346.15 C808.37,346.37 808.53,346.59 808.70,346.81 C808.87,347.03 809.03,347.24 809.20,347.46 C809.37,347.67 809.53,347.88 809.70,348.09 C809.87,348.30 810.03,348.51 810.20,348.71 C810.37,348.92 810.53,349.12 810.70,349.32 C810.87,349.52 811.03,349.72 811.20,349.92 C811.37,350.12 811.53,350.31 811.70,350.51 C811.87,350.70 812.03,350.89 812.20,351.08 C812.37,351.27 812.53,351.46 812.70,351.64 C812.87,351.83 813.03,352.01 813.20,352.19 C813.37,352.37 813.53,352.55 813.70,352.73 C813.87,352.90 814.03,353.08 814.20,353.25 C814.37,353.42 814.53,353.59 814.70,353.76 C814.87,353.93 815.03,354.10 815.20,354.26 C815.37,354.42 815.53,354.58 815.70,354.74 C815.87,354.90 816.03,355.06 816.20,355.21 C816.37,355.37 816.53,355.52 816.70,355.67 C816.87,355.82 817.03,355.97 817.20,356.11 C817.37,356.26 817.53,356.40 817.70,356.54 C817.87,356.68 818.03,356.82 818.20,356.95 C818.37,357.09 818.53,357.22 818.70,357.35 C818.87,357.48 819.03,357.61 819.20,357.74 C819.37,357.87 819.53,357.99 819.70,358.11 C819.87,358.23 820.03,358.35 820.20,358.47 C820.37,358.58 820.53,358.70 820.70,358.81 C820.87,358.92 821.03,359.03 821.20,359.14 C821.37,359.25 821.53,359.35 821.70,359.45 C821.87,359.56 822.03,359.66 822.20,359.75 C822.37,359.85 822.53,359.95 822.70,360.04 C822.87,360.13 823.03,360.22 823.20,360.31 C823.37,360.40 823.53,360.49 823.70,360.57 C823.87,360.65 824.03,360.73 824.20,360.81 C824.37,360.89 824.53,360.97 824.70,361.04 C824.87,361.12 825.03,361.19 825.20,361.26 C825.37,361.33 825.53,361.40 825.70,361.46 C825.87,361.53 826.03,361.59 826.20,361.65 C826.37,361.71 826.53,361.77 826.70,361.82 C826.87,361.88 827.03,361.93 827.20,361.98 C827.37,362.03 827.53,362.08 827.70,362.13 C827.87,362.18 828.03,362.22 828.20,362.26 C828.37,362.30 828.53,362.34 828.70,362.38 C828.87,362.42 829.03,362.45 829.20,362.48 C829.37,362.51 829.53,362.54 829.70,362.57 C829.87,362.60 830.03,362.62 830.20,362.65 C830.37,362.67 830.53,362.69 830.70,362.71 C830.87,362.72 831.03,362.74 831.20,362.75 C831.37,362.76 831.53,362.78 831.70,362.78 C831.87,362.79 832.03,362.80 832.20,362.80 C832.37,362.80 832.53,362.80 832.70,362.80 C832.87,362.80 833.03,362.80 833.20,362.79 C833.37,362.78 833.53,362.77 833.70,362.76 C833.87,362.75 834.03,362.74 834.20,362.72 C834.37,362.70 834.53,362.69 834.70,362.66 C834.87,362.64 835.03,362.62 835.20,362.59 C835.37,362.57 835.53,362.54 835.70,362.51 C835.87,362.48 836.03,362.44 836.20,362.41 C836.37,362.37 836.53,362.33 836.70,362.29 C836.87,362.25 837.03,362.21 837.20,362.16 C837.37,362.12 837.53,362.07 837.70,362.02 C837.87,361.97 838.03,361.92 838.20,361.86 C838.37,361.81 838.53,361.75 838.70,361.69 C838.87,361.63 839.03,361.57 839.20,361.51 C839.37,361.44 839.53,361.37 839.70,361.30 C839.87,361.24 840.03,361.16 840.20,361.09 C840.37,361.02 840.53,360.94 840.70,360.86 C840.87,360.78 841.03,360.70 841.20,360.62 C841.37,360.54 841.53,360.45 841.70,360.36 C841.87,360.27 842.03,360.18 842.20,360.09 C842.37,360.00 842.53,359.90 842.70,359.81 C842.87,359.71 843.03,359.61 843.20,359.51 C843.37,359.41 843.53,359.30 843.70,359.19 C843.87,359.09 844.03,358.98 844.20,358.87 C844.37,358.76 844.53,358.64 844.70,358.53 C844.87,358.41 845.03,358.29 845.20,358.17 C845.37,358.05 845.53,357.93 845.70,357.80 C845.87,357.68 846.03,357.55 846.20,357.42 C846.37,357.29 846.53,357.16 846.70,357.03 C846.87,356.89 847.03,356.75 847.20,356.62 C847.37,356.48 847.53,356.34 847.70,356.19 C847.87,356.05 848.03,355.90 848.20,355.75 C848.37,355.61 848.53,355.46 848.70,355.30 C848.87,355.15 849.03,355.00 849.20,354.84 C849.37,354.68 849.53,354.52 849.70,354.36 C849.87,354.20 850.03,354.04 850.20,353.87 C850.37,353.70 850.53,353.53 850.70,353.36 C850.87,353.19 851.03,353.02 851.20,352.85 C851.37,352.67 851.53,352.49 851.70,352.31 C851.87,352.13 852.03,351.95 852.20,351.77 C852.37,351.59 852.53,351.40 852.70,351.21 C852.87,351.02 853.03,350.83 853.20,350.64 C853.37,350.45 853.53,350.25 853.70,350.06 C853.87,349.86 854.03,349.66 854.20,349.46 C854.37,349.26 854.53,349.06 854.70,348.85 C854.87,348.65 855.03,348.44 855.20,348.23 C855.37,348.02 855.53,347.81 855.70,347.59 C855.87,347.38 856.03,347.16 856.20,346.95 C856.37,346.73 856.53,346.51 856.70,346.29 C856.87,346.06 857.03,345.84 857.20,345.61 C857.37,345.39 857.53,345.16 857.70,344.93 C857.87,344.70 858.03,344.47 858.20,344.23 C858.37,344.00 858.53,343.76 858.70,343.52 C858.87,343.29 859.03,343.05 859.20,342.80 C859.37,342.56 859.53,342.32 859.70,342.07 C859.87,341.82 860.03,341.58 860.20,341.33 C860.37,341.08 860.53,340.82 860.70,340.57 C860.87,340.32 861.03,340.06 861.20,339.80 C861.37,339.54 861.53,339.28 861.70,339.02 C861.87,338.76 862.03,338.50 862.20,338.23 C862.37,337.96 862.53,337.70 862.70,337.43 C862.87,337.16 863.03,336.89 863.20,336.61 C863.37,336.34 863.53,336.06 863.70,335.79 C863.87,335.51 864.03,335.23 864.20,334.95 C864.37,334.67 864.53,334.39 864.70,334.10 C864.87,333.82 865.03,333.53 865.20,333.24 C865.37,332.96 865.53,332.67 865.70,332.38 C865.87,332.08 866.03,331.79 866.20,331.49 C866.37,331.20 866.53,330.90 866.70,330.60 C866.87,330.31 867.03,330.00 867.20,329.70 C867.37,329.40 867.53,329.10 867.70,328.79 C867.87,328.49 868.03,328.18 868.20,327.87 C868.37,327.56 868.53,327.25 868.70,326.94 C868.87,326.62 869.03,326.31 869.20,325.99 C869.37,325.68 869.53,325.36 869.70,325.04 C869.87,324.72 870.03,324.40 870.20,324.08 C870.37,323.76 870.53,323.43 870.70,323.11 C870.87,322.78 871.03,322.46 871.20,322.13 C871.37,321.80 871.53,321.47 871.70,321.14 C871.87,320.80 872.03,320.47 872.20,320.14 C872.37,319.80 872.53,319.47 872.70,319.13 C872.87,318.79 873.03,318.45 873.20,318.11 C873.37,317.77 873.53,317.43 873.70,317.08 C873.87,316.74 874.03,316.39 874.20,316.05 C874.37,315.70 874.53,315.35 874.70,315.00 C874.87,314.65 875.03,314.30 875.20,313.95 C875.37,313.59 875.53,313.24 875.70,312.89 C875.87,312.53 876.03,312.17 876.20,311.82 C876.37,311.46 876.53,311.10 876.70,310.74 C876.87,310.38 877.03,310.01 877.20,309.65 C877.37,309.29 877.53,308.92 877.70,308.56 C877.87,308.19 878.03,307.82 878.20,307.45 C878.37,307.08 878.53,306.71 878.70,306.34 C878.87,305.97 879.03,305.60 879.20,305.23 C879.37,304.85 879.53,304.48 879.70,304.10 C879.87,303.73 880.03,303.35 880.20,302.97 C880.37,302.59 880.53,302.21 880.70,301.83 C880.87,301.45 881.03,301.07 881.20,300.68 C881.37,300.30 881.53,299.92 881.70,299.53 C881.87,299.15 882.03,298.76 882.20,298.37 C882.37,297.98 882.53,297.59 882.70,297.20 C882.87,296.81 883.03,296.42 883.20,296.03 C883.37,295.64 883.53,295.25 883.70,294.85 C883.87,294.46 884.03,294.06 884.20,293.67 C884.37,293.27 884.53,292.87 884.70,292.48 C884.87,292.08 885.03,291.68 885.20,291.28 C885.37,290.88 885.53,290.48 885.70,290.08 C885.87,289.68 886.03,289.27 886.20,288.87 C886.37,288.47 886.53,288.06 886.70,287.66 C886.87,287.25 887.03,286.84 887.20,286.44 C887.37,286.03 887.53,285.62 887.70,285.21 C887.87,284.80 888.03,284.39 888.20,283.98 C888.37,283.57 888.53,283.16 888.70,282.75 C888.87,282.34 889.03,281.93 889.20,281.51 C889.37,281.10 889.53,280.68 889.70,280.27 C889.87,279.85 890.03,279.44 890.20,279.02 C890.37,278.61 890.53,278.19 890.70,277.77 C890.87,277.35 891.03,276.93 891.20,276.52 C891.37,276.10 891.53,275.68 891.70,275.26 C891.87,274.84 892.03,274.42 892.20,273.99 C892.37,273.57 892.53,273.15 892.70,272.73 C892.87,272.30 893.03,271.88 893.20,271.46 C893.37,271.03 893.53,270.61 893.70,270.18 C893.87,269.76 894.03,269.33 894.20,268.91 C894.37,268.48 894.53,268.06 894.70,267.63 C894.87,267.20 895.03,266.77 895.20,266.35 C895.37,265.92 895.53,265.49 895.70,265.06 C895.87,264.63 896.03,264.20 896.20,263.77 C896.37,263.35 896.53,262.92 896.70,262.49 C896.87,262.06 897.03,261.62 897.20,261.19 C897.37,260.76 897.53,260.33 897.70,259.90 C897.87,259.47 898.03,259.04 898.20,258.60 C898.37,258.17 898.53,257.74 898.70,257.31 C898.87,256.87 899.03,256.44 899.20,256.01 C899.37,255.58 899.53,255.14 899.70,254.71 C899.87,254.28 899.70,254.71 900.20,253.41 C900.70,252.10 901.92,250.57 902.70,246.89 C903.48,243.20 903.92,231.25 904.90,231.30 C905.88,231.35 907.37,249.97 908.60,247.20 C909.83,244.43 910.92,219.10 912.30,214.70 C913.68,210.30 915.33,223.58 916.90,220.80 C918.47,218.02 920.23,203.28 921.70,198.00 C923.17,192.72 924.87,191.00 925.70,189.15 C926.53,187.29 926.37,187.62 926.70,186.86 C927.03,186.10 927.37,185.35 927.70,184.60 C928.03,183.85 928.37,183.11 928.70,182.37 C929.03,181.63 929.37,180.90 929.70,180.17 C930.03,179.44 930.37,178.72 930.70,178.00 C931.03,177.28 931.37,176.57 931.70,175.86 C932.03,175.16 932.37,174.46 932.70,173.76 C933.03,173.07 933.37,172.38 933.70,171.70 C934.03,171.01 934.37,170.34 934.70,169.66 C935.03,168.99 935.37,168.33 935.70,167.67 C936.03,167.01 936.37,166.36 936.70,165.71 C937.03,165.07 937.37,164.43 937.70,163.80 C938.03,163.16 938.37,162.54 938.70,161.92 C939.03,161.30 939.37,160.68 939.70,160.08 C940.03,159.47 940.37,158.87 940.70,158.28 C941.03,157.69 941.37,157.11 941.70,156.53 C942.03,155.95 942.37,155.38 942.70,154.82 C943.03,154.26 943.37,153.70 943.70,153.15 C944.03,152.60 944.37,152.06 944.70,151.53 C945.03,151.00 945.37,150.47 945.70,149.95 C946.03,149.44 946.37,148.93 946.70,148.42 C947.03,147.92 947.37,147.43 947.70,146.94 C948.03,146.45 948.37,145.98 948.70,145.51 C949.03,145.04 949.37,144.57 949.70,144.12 C950.03,143.67 950.37,143.22 950.70,142.78 C951.03,142.35 951.37,141.92 951.70,141.50 C952.03,141.08 952.37,140.66 952.70,140.26 C953.03,139.86 953.37,139.46 953.70,139.08 C954.03,138.69 954.37,138.31 954.70,137.94 C955.03,137.57 955.37,137.21 955.70,136.86 C956.03,136.51 956.37,136.17 956.70,135.83 C957.03,135.50 957.37,135.17 957.70,134.86 C958.03,134.54 958.37,134.23 958.70,133.94 C959.03,133.64 959.37,133.35 959.70,133.07 C960.03,132.79 960.37,132.52 960.70,132.26 C961.03,132.00 961.37,131.74 961.70,131.50 C962.03,131.26 962.37,131.02 962.70,130.80 C963.03,130.57 963.37,130.36 963.70,130.15 C964.03,129.95 964.37,129.75 964.70,129.56 C965.03,129.38 965.37,129.20 965.70,129.03 C966.03,128.86 966.53,128.63 966.70,128.55" fill="none" stroke="#ffac38" stroke-width="1.0"/>
<polyline points="632.5,209.3 633.5,206.8 634.5,204.3 635.5,201.9 636.5,199.5 637.5,197.1 638.5,194.7 639.5,192.3 640.5,190.0 641.5,187.7 642.5,185.4 643.5,183.2 644.5,181.0 645.5,178.8 646.5,176.6 647.5,174.5 648.5,172.4 649.5,170.4 650.5,168.4 651.5,166.4 652.5,164.4 653.5,162.6 654.5,160.7 655.5,158.9 656.5,157.1 657.5,155.4 658.5,153.7 659.5,152.0 660.5,150.4 661.5,148.9 662.5,147.4 663.5,145.9 664.5,144.5 665.5,143.1 666.5,141.8 667.5,140.6 668.5,139.4 669.5,138.2 670.5,137.1 671.5,136.0 672.5,135.0 673.5,134.1 674.5,133.2 675.5,132.4 676.5,131.6 677.5,130.8 678.5,130.2 679.5,129.6 680.5,129.0 681.5,128.5 682.5,128.0 683.5,127.6 684.5,127.3 685.5,127.0 686.5,126.8 687.5,126.7 688.5,126.5 689.5,126.5 690.5,126.5 691.5,126.6 692.5,126.7 693.5,126.9 694.5,127.1 695.5,127.4 696.5,127.8 697.5,128.2 698.5,128.7 699.5,129.2 700.5,129.8 701.5,130.4 702.5,131.1 703.5,131.9 704.5,132.7 705.5,133.5 706.5,134.5 707.5,135.4 708.5,136.5 709.5,137.5 710.5,138.7 711.5,139.8 712.5,141.1 713.5,142.4 714.5,143.7 715.5,145.1 716.5,146.5 717.5,148.0 718.5,149.5 719.5,151.1 720.5,152.7 721.5,154.3 722.5,156.1 723.5,157.8 724.5,159.6 725.5,161.4 726.5,163.3 727.5,165.2 728.5,167.2 729.5,169.2 730.5,171.2 731.5,173.3 732.5,175.4 733.5,177.5 734.5,179.6 735.5,181.8 736.5,184.1 737.5,186.3 738.5,188.6 739.5,190.9 740.5,193.3 741.5,195.6 742.5,198.0 743.5,200.4 744.5,202.9 745.5,205.3 746.5,207.8 747.5,210.3 748.5,212.8 749.5,215.3 750.5,217.8 751.5,220.4 752.5,223.0 753.5,225.5 754.5,228.1 755.5,230.7 756.5,233.3 757.5,235.9 758.5,238.5 759.5,241.1 760.5,243.7 761.5,246.3 762.5,248.9 763.5,251.5 764.5,254.1 765.5,256.7 766.5,259.3 767.5,261.9 768.5,264.5 769.5,267.1 770.5,269.6 771.5,272.2 772.5,274.7 773.5,277.2 774.5,279.7 775.5,282.2 776.5,284.7 777.5,287.1 778.5,289.5 779.5,291.9 780.5,294.3 781.5,296.7 782.5,299.0 783.5,301.3 784.5,303.6 785.5,305.8 786.5,308.0 787.5,310.2 788.5,312.4 789.5,314.5 790.5,316.6 791.5,318.6 792.5,320.6 793.5,322.6 794.5,324.6 795.5,326.4 796.5,328.3 797.5,330.1 798.5,331.9 799.5,333.6 800.5,335.3 801.5,337.0 802.5,338.6 803.5,340.1 804.5,341.6 805.5,343.1 806.5,344.5 807.5,345.9 808.5,347.2 809.5,348.4 810.5,349.6 811.5,350.8 812.5,351.9 813.5,353.0 814.5,354.0 815.5,354.9 816.5,355.8 817.5,356.6 818.5,357.4 819.5,358.2 820.5,358.8 821.5,359.4 822.5,360.0 823.5,360.5 824.5,361.0 825.5,361.4 826.5,361.7 827.5,362.0 828.5,362.2 829.5,362.3 830.5,362.5 831.5,362.5 832.5,362.5 833.5,362.4 834.5,362.3 835.5,362.1 836.5,361.9 837.5,361.6 838.5,361.2 839.5,360.8 840.5,360.3 841.5,359.8 842.5,359.2 843.5,358.6 844.5,357.9 845.5,357.1 846.5,356.3 847.5,355.5 848.5,354.5 849.5,353.6 850.5,352.5 851.5,351.5 852.5,350.3 853.5,349.2 854.5,347.9 855.5,346.6 856.5,345.3 857.5,343.9 858.5,342.5 859.5,341.0 860.5,339.5 861.5,337.9 862.5,336.3 863.5,334.7 864.5,332.9 865.5,331.2 866.5,329.4 867.5,327.6 868.5,325.7 869.5,323.8 870.5,321.8 871.5,319.8 872.5,317.8 873.5,315.7 874.5,313.6 875.5,311.5 876.5,309.4 877.5,307.2 878.5,304.9 879.5,302.7 880.5,300.4 881.5,298.1 882.5,295.7 883.5,293.4 884.5,291.0 885.5,288.6 886.5,286.1 887.5,283.7 888.5,281.2 889.5,278.7 890.5,276.2 891.5,273.7 892.5,271.2 893.5,268.6 894.5,266.0 895.5,263.5 896.5,260.9 897.5,258.3 898.5,255.7 899.5,253.1 900.5,250.5 901.5,247.9 902.5,245.3 903.5,242.7 904.5,240.1 905.5,237.5 906.5,234.9 907.5,232.3 908.5,229.7 909.5,227.1 910.5,224.5 911.5,221.9 912.5,219.4 913.5,216.8 914.5,214.3 915.5,211.8 916.5,209.3 917.5,206.8 918.5,204.3 919.5,201.9 920.5,199.5 921.5,197.1 922.5,194.7 923.5,192.3 924.5,190.0 925.5,187.7 926.5,185.4 927.5,183.2 928.5,181.0 929.5,178.8 930.5,176.6 931.5,174.5 932.5,172.4 933.5,170.4 934.5,168.4 935.5,166.4 936.5,164.4 937.5,162.6 938.5,160.7 939.5,158.9 940.5,157.1 941.5,155.4 942.5,153.7 943.5,152.0 944.5,150.4 945.5,148.9 946.5,147.4 947.5,145.9 948.5,144.5 949.5,143.1 950.5,141.8 951.5,140.6 952.5,139.4 953.5,138.2 954.5,137.1 955.5,136.0 956.5,135.0 957.5,134.1 958.5,133.2 959.5,132.4 960.5,131.6 961.5,130.8 962.5,130.2 963.5,129.6 964.5,129.0 965.5,128.5 966.5,128.0" fill="none" stroke="#3a3af0" stroke-width="1.1"/>
<rect x="647.5" y="426.5" width="349" height="10" fill="#00ff00" stroke="#1f7a1f" stroke-width="1"/>
<path d="M619.5,446 L619.5,443 L622.5,443 M619.5,446 L622.5,443" stroke="#4a8ad0" stroke-width="1" fill="none"/>
</svg>






<div style="position:absolute;left:618px;top:446px;width:403px;height:19px;background:#f7f7f7"></div>
<div style="position:absolute;left:619px;top:446px;width:64px;height:19px;background:linear-gradient(#fdfdfd,#f0f0f0);border-right:1px solid #d8d8d8;box-sizing:border-box"></div>
<svg style="position:absolute;left:617px;top:446px" width="70" height="20">
<g fill="#8a8a8a"><rect x="6" y="3.5" width="1.2" height="1.2"/><rect x="6" y="6.5" width="1.2" height="1.2"/><rect x="6" y="9.5" width="1.2" height="1.2"/><rect x="6" y="12.5" width="1.2" height="1.2"/></g>
<path d="M17.5,10 L20,7 L22,9" stroke="#d0d0d0" stroke-width="0.8" fill="none"/><rect x="17" y="12.5" width="6" height="1.5" fill="#d0d0d0"/>
<circle cx="37.3" cy="9.3" r="5.4" fill="none" stroke="#4a4a4a" stroke-width="0.9"/><circle cx="37.3" cy="9.3" r="3.4" fill="none" stroke="#4a4a4a" stroke-width="0.9"/>
<path d="M50.8,4.5 L59.8,13.8 M59.8,4.5 L50.8,13.8" stroke="#b8b8b8" stroke-width="1.4"/>
</svg>
<svg style="position:absolute;left:0;top:0" width="1024" height="484" font-family="Liberation Sans" text-rendering="geometricPrecision"><text x="19.70" y="13.50" font-size="11.14" fill="#2a2a2a" textLength="41.37" lengthAdjust="spacingAndGlyphs">SignalPop</text>
<text x="77.00" y="13.00" font-size="10.04" fill="#000" font-weight="bold" textLength="101.35" lengthAdjust="spacingAndGlyphs">prj-DEFAULT-_LiquidNN</text>
<text x="3.60" y="39.30" font-size="13.64" fill="#333" textLength="45.18" lengthAdjust="spacingAndGlyphs">Project:</text>
<text x="59.68" y="39.50" font-size="14.22" fill="#000" font-weight="bold" textLength="182.50" lengthAdjust="spacingAndGlyphs">_LiquidNN (open) - stage: RNN</text>
<text x="7.80" y="64.00" font-size="9.09" fill="#ff2a2a" textLength="76.29" lengthAdjust="spacingAndGlyphs">Network Error (loss)</text>
<text x="7.80" y="184.00" font-size="9.53" fill="#22ee22" textLength="80.41" lengthAdjust="spacingAndGlyphs">Network Accuracy</text>
<text x="7.80" y="303.80" font-size="8.94" fill="#33ee33" textLength="85.67" lengthAdjust="spacingAndGlyphs">Network Throughput</text>
<text x="7.80" y="314.80" font-size="9.09" fill="#e020e0" textLength="143.07" lengthAdjust="spacingAndGlyphs">MyCaffe Throughput (fwd + bwd)</text>
<text x="7.80" y="326.20" font-size="9.09" fill="#e0e000" textLength="84.06" lengthAdjust="spacingAndGlyphs">Garbage Collection</text>
<text x="6.70" y="446.10" font-size="9.53" fill="#1a1a1a" textLength="34.39" lengthAdjust="spacingAndGlyphs">Progress:</text>
<text x="231.00" y="446.60" font-size="9.97" fill="#10e010" textLength="32.77" lengthAdjust="spacingAndGlyphs">100.00%</text>
<text x="275.00" y="446.60" font-size="10.26" fill="#00ff00" font-weight="bold" textLength="254.31" lengthAdjust="spacingAndGlyphs">NVIDIA RTX A6000 (51.21 GB - P2P on ID #0; Image DB IMG_V2</text>
<text x="72.50" y="466.90" font-size="9.71" fill="#1a1a1a" textLength="18.52" lengthAdjust="spacingAndGlyphs">open</text>
<text x="127.00" y="466.90" font-size="9.71" fill="#1a1a1a" textLength="27.54" lengthAdjust="spacingAndGlyphs">training</text>
<text x="181.00" y="466.90" font-size="9.71" fill="#1a1a1a" textLength="25.64" lengthAdjust="spacingAndGlyphs">testing</text>
<text x="236.00" y="466.90" font-size="9.71" fill="#1a1a1a" textLength="28.30" lengthAdjust="spacingAndGlyphs">running</text>
<text x="292.30" y="467.00" font-size="11.58" fill="#1a1a1a" textLength="55.52" lengthAdjust="spacingAndGlyphs">Accuracy View</text>
<text x="373.40" y="467.00" font-size="11.14" fill="#1a1a1a" textLength="50.28" lengthAdjust="spacingAndGlyphs">Testing Type:</text>
<text x="446.90" y="467.00" font-size="11.14" fill="#a0a0a0" textLength="26.09" lengthAdjust="spacingAndGlyphs">Default</text>
<text x="498.40" y="467.00" font-size="11.14" fill="#a0a0a0" textLength="38.28" lengthAdjust="spacingAndGlyphs">Test Many</text>
<text x="623.70" y="10.50" font-size="9.68" fill="#000" textLength="41.37" lengthAdjust="spacingAndGlyphs">Properties</text>
<text x="635.60" y="476.60" font-size="9.97" fill="#1a1a2a" textLength="41.50" lengthAdjust="spacingAndGlyphs">Properties</text>
<text x="699.80" y="476.60" font-size="9.97" fill="#707070" textLength="32.05" lengthAdjust="spacingAndGlyphs">Toolbox</text>
<text x="754.00" y="476.60" font-size="9.97" fill="#707070" textLength="41.70" lengthAdjust="spacingAndGlyphs">Resources</text>
<text x="818.70" y="476.60" font-size="9.97" fill="#707070" textLength="27.26" lengthAdjust="spacingAndGlyphs">Debug</text>
<text x="641.30" y="34.00" font-size="10.26" fill="#1a1a1a" textLength="107.80" lengthAdjust="spacingAndGlyphs">MyCaffe Test Gym - Curve</text>
<text x="627.70" y="71.80" font-size="9.68" fill="#1e1e1e" textLength="43.80" lengthAdjust="spacingAndGlyphs">X = 442.00</text>
<text x="627.70" y="81.20" font-size="9.82" fill="#1e1e1e" textLength="33.26" lengthAdjust="spacingAndGlyphs">Y = 0.99</text>
<text x="627.70" y="90.80" font-size="10.12" fill="#f5a030" textLength="81.06" lengthAdjust="spacingAndGlyphs">Predicted Y = 0.98</text>
<text x="627.70" y="99.60" font-size="9.82" fill="#1e1e1e" textLength="74.83" lengthAdjust="spacingAndGlyphs">Curve Type = SIN</text>
<text x="627.20" y="435.20" font-size="8.5" fill="#3a3a3a" textLength="17.78" lengthAdjust="spacingAndGlyphs">Steps</text>
<text x="990.00" y="444.60" font-size="7.92" fill="#2a3a3a" textLength="10.35" lengthAdjust="spacingAndGlyphs">442</text></svg>
</body></html>
